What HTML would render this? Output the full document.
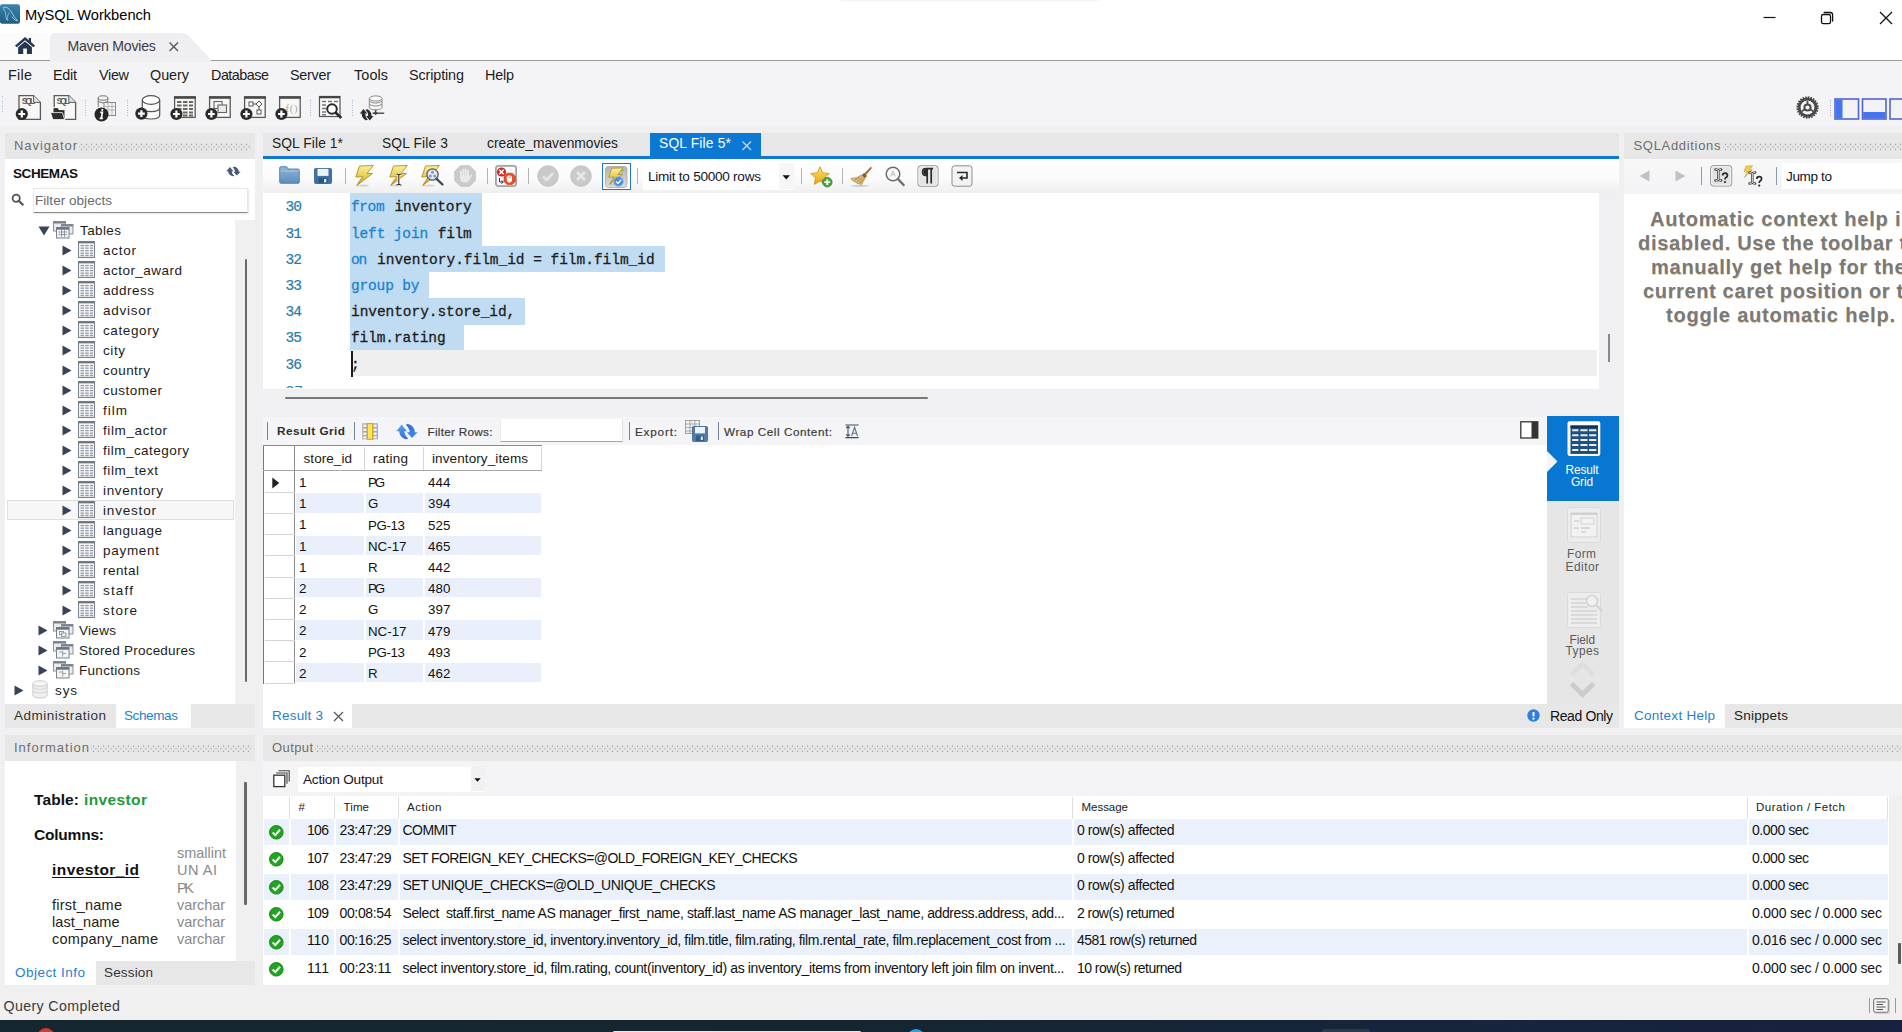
<!DOCTYPE html>
<html>
<head>
<meta charset="utf-8">
<title>MySQL Workbench</title>
<style>
*{box-sizing:border-box;margin:0;padding:0}
html,body{width:1902px;height:1032px;overflow:hidden;background:#f0f0f2;font-family:"Liberation Sans",sans-serif;color:#1a1a1a}
.a{position:absolute}
.t{position:absolute;white-space:pre;line-height:1}
.m{font-family:"Liberation Mono",monospace}
.s{font-family:"Liberation Serif",serif}
svg{overflow:visible}
</style>
</head>
<body>
<div class="a" style="left:0px;top:0px;width:1902px;height:60px;background:#ffffff;"></div>
<div class="a" style="left:840px;top:0px;width:260px;height:2px;background:linear-gradient(#ececec,#ffffff);border-radius:0 0 60px 60px;opacity:.7;"></div>
<svg class="a" style="left:0px;top:4px;" width="21" height="21" viewBox="0 0 21 21"><defs><linearGradient id="ai" x1="0" y1="0" x2="0" y2="1"><stop offset="0" stop-color="#3a86ad"/><stop offset="1" stop-color="#1f5d84"/></linearGradient></defs><rect x="0" y="0.2" width="20" height="19.6" rx="2.2" fill="url(#ai)"/>
<path d="M3.2 3.6 C5 2.6 7.6 3.2 9.6 5.6 C12 8.4 13.2 12 16.6 15.4 L17.6 17 L15.4 16.2 C13.8 15.4 12.8 14 12 12.6" fill="none" stroke="#b9d3e2" stroke-width="0.9"/>
<path d="M3.2 3.6 C3.6 5.6 4.8 6.4 5.4 8.4 C6 10.6 5.6 13 6.8 15.6 L7.6 13.6 C7.4 11.4 8.4 10.4 9.2 8.6" fill="none" stroke="#a9c7d9" stroke-width="0.8"/>
<path d="M6.6 14.4 L7.6 16.6 L8.4 15.6" fill="none" stroke="#a9c7d9" stroke-width="0.7"/></svg>
<div class="t" style="top:7.56px;font-size:14.7px;letter-spacing:-0.038px;left:25px;color:#000;">MySQL Workbench</div>
<svg class="a" style="left:1760px;top:8px;" width="140" height="20" viewBox="0 0 140 20"><path d="M3.5 9.5 H15.5" stroke="#111" stroke-width="1.2" fill="none"/>
<rect x="61.5" y="6.5" width="9" height="9.2" rx="1.8" fill="none" stroke="#111" stroke-width="1.3"/>
<path d="M64.2 4.5 H70.3 Q72.6 4.5 72.6 6.8 V13" fill="none" stroke="#111" stroke-width="1.3" stroke-linecap="round"/>
<path d="M120 4 L132 16 M132 4 L120 16" stroke="#111" stroke-width="1.3" fill="none"/></svg>
<svg class="a" style="left:0px;top:30px;" width="52" height="31" viewBox="0 0 52 31"><path d="M0 3 H44 Q48 3 50 7 V31 H0Z" fill="#fbfbfc"/></svg>
<svg class="a" style="left:13.5px;top:35.6px;" width="24" height="20" viewBox="0 0 24 20"><g transform="scale(0.92)"><path d="M12 1 L1 10.5 L3 12.3 L12 4.6 L21 12.3 L23 10.5 L18.5 6.6 V2.2 H16 V4.5 Z" fill="#26364d"/>
<path d="M4.5 12.3 L12 6 L19.5 12.3 V19.5 H14 V13.5 H10 V19.5 H4.5 Z" fill="#26364d"/></g></svg>
<svg class="a" style="left:50px;top:30px;" width="165" height="31" viewBox="0 0 165 31"><path d="M0 31 V7 Q0 3 4 3 H131 Q136 3 139 6 L162 31 Z" fill="#efeff2"/></svg>
<div class="t" style="top:39.36px;font-size:14.1px;letter-spacing:-0.233px;left:67.5px;color:#3c3c44;">Maven Movies</div>
<svg class="a" style="left:168px;top:41px;" width="12" height="12" viewBox="0 0 12 12"><path d="M1.5 1.5 L10 10 M10 1.5 L1.5 10" stroke="#555" stroke-width="1.3"/></svg>
<div class="a" style="left:0px;top:60px;width:50px;height:1px;background:#9a9a9a;"></div>
<div class="a" style="left:211px;top:60px;width:1691px;height:1px;background:#9a9a9a;"></div>
<div class="a" style="left:0px;top:61px;width:1902px;height:66px;background:#f4f4f6;"></div>
<div class="a" style="left:0px;top:61px;width:211px;height:1px;background:#efeff2;"></div>
<div class="t" style="top:67.81px;font-size:14.4px;letter-spacing:0.266px;left:8px;color:#1c1c1c;">File</div>
<div class="t" style="top:67.81px;font-size:14.4px;letter-spacing:-0.271px;left:53px;color:#1c1c1c;">Edit</div>
<div class="t" style="top:67.81px;font-size:14.4px;letter-spacing:-0.312px;left:99px;color:#1c1c1c;">View</div>
<div class="t" style="top:67.81px;font-size:14.4px;letter-spacing:-0.051px;left:150px;color:#1c1c1c;">Query</div>
<div class="t" style="top:67.81px;font-size:14.4px;letter-spacing:-0.516px;left:211px;color:#1c1c1c;">Database</div>
<div class="t" style="top:67.81px;font-size:14.4px;letter-spacing:-0.278px;left:290px;color:#1c1c1c;">Server</div>
<div class="t" style="top:67.81px;font-size:14.4px;letter-spacing:0.102px;left:354px;color:#1c1c1c;">Tools</div>
<div class="t" style="top:67.81px;font-size:14.4px;letter-spacing:-0.125px;left:409px;color:#1c1c1c;">Scripting</div>
<div class="t" style="top:67.81px;font-size:14.4px;letter-spacing:-0.203px;left:485px;color:#1c1c1c;">Help</div>
<div class="a" style="left:0px;top:126px;width:1902px;height:7px;background:#f0f0f2;"></div>
<div class="a" style="left:2px;top:96px;width:1.2px;height:17px;background-image:linear-gradient(#8ea6ca 50%,rgba(0,0,0,0) 50%);background-size:1.2px 2.5px;opacity:.85;"></div>
<div class="a" style="left:85px;top:99.5px;width:1.2px;height:17px;background-image:linear-gradient(#8ea6ca 50%,rgba(0,0,0,0) 50%);background-size:1.2px 2.5px;opacity:.85;"></div>
<div class="a" style="left:127px;top:99.5px;width:1.2px;height:17px;background-image:linear-gradient(#8ea6ca 50%,rgba(0,0,0,0) 50%);background-size:1.2px 2.5px;opacity:.85;"></div>
<div class="a" style="left:310px;top:99.5px;width:1.2px;height:17px;background-image:linear-gradient(#8ea6ca 50%,rgba(0,0,0,0) 50%);background-size:1.2px 2.5px;opacity:.85;"></div>
<div class="a" style="left:352px;top:99.5px;width:1.2px;height:17px;background-image:linear-gradient(#8ea6ca 50%,rgba(0,0,0,0) 50%);background-size:1.2px 2.5px;opacity:.85;"></div>
<svg class="a" style="left:15px;top:95px;" width="28" height="27" viewBox="0 0 28 27"><path d="M4 0.6 H18.6 L25.4 7.4 V24.4 H4 Z" fill="#f7f7f7" stroke="#5a5a5a" stroke-width="1.3"/><path d="M18.6 0.6 V7.4 H25.4" fill="#e2e2e2" stroke="#5a5a5a" stroke-width="1"/><circle cx="6.8" cy="19" r="6.1" fill="#2b2b2b"/><path d="M3.4 19 H10.2 M6.8 15.6 V22.4" stroke="#fff" stroke-width="2.2"/></svg>
<svg class="a" style="left:49px;top:95px;" width="28" height="27" viewBox="0 0 28 27"><g transform="translate(1.2,0)"><path d="M4 0.6 H18.6 L25.4 7.4 V24.4 H4 Z" fill="#f7f7f7" stroke="#5a5a5a" stroke-width="1.3"/><path d="M18.6 0.6 V7.4 H25.4" fill="#e2e2e2" stroke="#5a5a5a" stroke-width="1"/></g><path d="M4 24.6 V12.6 H9 L10 14.6 H16 V24.6Z" fill="#2e2e2e" stroke="#fff" stroke-width="1"/><path d="M1.6 17.6 H13.4 L15.6 24.6 H3.8Z" fill="#2e2e2e" stroke="#fff" stroke-width="0.8"/></svg>
<div class="t" style="top:96.82px;font-size:8.6px;letter-spacing:-2.236px;left:21.7px;color:#5a5a5a;font-weight:700;">SQL</div>
<div class="t" style="top:96.82px;font-size:8.6px;letter-spacing:-2.236px;left:56.6px;color:#5a5a5a;font-weight:700;">SQL</div>
<svg class="a" style="left:92px;top:93px;" width="26" height="30" viewBox="0 0 26 30"><ellipse cx="11" cy="5" rx="4.8" ry="2.2" fill="#f2f2f2" stroke="#777" stroke-width="1"/><path d="M6.2 5 V14 M15.8 5 V10" stroke="#777" fill="none"/><path d="M6.2 8.5 Q11 11.5 15.8 8.5" stroke="#777" fill="none"/>
<rect x="12" y="9.5" width="11.5" height="13" fill="#f4f4f4" stroke="#888" stroke-width="1"/><path d="M12 13.5 H23.5 M12 17 H23.5 M16 9.5 V22.5 M20 9.5 V22.5" stroke="#aaa" stroke-width="0.8"/>
<circle cx="9.5" cy="21.5" r="7" fill="#262626"/><path d="M10.5 15.8 l-0.4 2.2 M8.2 19.3 h2.2 l-1.1 6 M7.6 25.3 h3.4" stroke="#fff" stroke-width="1.7" fill="none"/></svg>
<svg class="a" style="left:134px;top:94px;" width="28" height="28" viewBox="0 0 28 28"><path d="M8.3 6 V21 Q8.3 25 17 25 Q25.7 25 25.7 21 V6" fill="#fbfbfb" stroke="#555" stroke-width="1.2"/><ellipse cx="17" cy="6" rx="8.7" ry="4.3" fill="#fdfdfd" stroke="#555" stroke-width="1.2"/><path d="M8.3 13.5 Q8.3 17.6 17 17.6 Q25.7 17.6 25.7 13.5" fill="none" stroke="#555" stroke-width="1.2"/><circle cx="7.4" cy="19.6" r="6.1" fill="#2b2b2b"/><path d="M4.0 19.6 H10.8 M7.4 16.200000000000003 V23.0" stroke="#fff" stroke-width="2.2"/></svg>
<svg class="a" style="left:169px;top:95px;" width="28" height="27" viewBox="0 0 28 27"><rect x="5.6" y="1.8" width="20.6" height="20.6" fill="#f7f7f5" stroke="#5a5a5a" stroke-width="1.3"/><path d="M5 2.6 H26.8" stroke="#4a4a4a" stroke-width="2.4"/><path d="M8 7 H12.5 M14 7 H18.5 M20 7 H24 M8 10.5 H12.5 M14 10.5 H18.5 M20 10.5 H24 M8 14 H12.5 M14 14 H18.5 M20 14 H24 M8 17.5 H12.5 M14 17.5 H18.5 M20 17.5 H24 M14 20.5 H18.5 M20 20.5 H24" stroke="#666" stroke-width="1.8"/><circle cx="7.4" cy="19" r="6.1" fill="#2b2b2b"/><path d="M4.0 19 H10.8 M7.4 15.6 V22.4" stroke="#fff" stroke-width="2.2"/></svg>
<svg class="a" style="left:204px;top:95px;" width="28" height="27" viewBox="0 0 28 27"><rect x="5.6" y="1.8" width="20.6" height="20.6" fill="#f7f7f5" stroke="#5a5a5a" stroke-width="1.3"/><path d="M5 2.6 H26.8" stroke="#4a4a4a" stroke-width="2.4"/><rect x="10" y="6.5" width="8" height="7" fill="#f4f4f4" stroke="#666" stroke-width="1.1"/><rect x="14" y="10" width="8.5" height="7.5" fill="#ececec" stroke="#666" stroke-width="1.1"/><circle cx="7.4" cy="19" r="6.1" fill="#2b2b2b"/><path d="M4.0 19 H10.8 M7.4 15.6 V22.4" stroke="#fff" stroke-width="2.2"/></svg>
<svg class="a" style="left:239px;top:95px;" width="28" height="27" viewBox="0 0 28 27"><rect x="5.6" y="1.8" width="20.6" height="20.6" fill="#f7f7f5" stroke="#5a5a5a" stroke-width="1.3"/><path d="M5 2.6 H26.8" stroke="#4a4a4a" stroke-width="2.4"/><rect x="10" y="7" width="4" height="4" fill="#fff" stroke="#555" stroke-width="1"/><path d="M14 9 H17" stroke="#555"/><path d="M20 6 L23 9 L20 12 L17 9 Z" fill="#fff" stroke="#555" stroke-width="1"/><path d="M20 12 V15" stroke="#555"/><rect x="18" y="15" width="4" height="4" fill="#fff" stroke="#555" stroke-width="1"/><circle cx="7.4" cy="19" r="6.1" fill="#2b2b2b"/><path d="M4.0 19 H10.8 M7.4 15.6 V22.4" stroke="#fff" stroke-width="2.2"/></svg>
<svg class="a" style="left:274px;top:95px;" width="28" height="27" viewBox="0 0 28 27"><rect x="5.6" y="1.8" width="20.6" height="20.6" fill="#f7f7f5" stroke="#5a5a5a" stroke-width="1.3"/><path d="M5 2.6 H26.8" stroke="#4a4a4a" stroke-width="2.4"/><text x="11.5" y="16.5" font-family="Liberation Serif" font-size="10.5" fill="#a8a8a8" textLength="12">f()</text><circle cx="7.4" cy="19" r="6.1" fill="#2b2b2b"/><path d="M4.0 19 H10.8 M7.4 15.6 V22.4" stroke="#fff" stroke-width="2.2"/></svg>
<svg class="a" style="left:318px;top:95px;" width="27" height="27" viewBox="0 0 27 27"><rect x="1.5" y="1.5" width="20.5" height="20" fill="#fbfbfb" stroke="#555" stroke-width="1.2"/><path d="M1.5 2.2 H22" stroke="#444" stroke-width="2.2"/><path d="M4 6.5 H8 M10 6.5 H14 M16 6.5 H20 M4 10 H8 M4 13.5 H8 M4 17 H8 M4 19.8 H8" stroke="#777" stroke-width="1.6"/>
<circle cx="14" cy="14" r="4.8" fill="#fff" stroke="#2b2b2b" stroke-width="2"/><path d="M17.5 17.5 L23.3 23" stroke="#2b2b2b" stroke-width="2.6"/></svg>
<svg class="a" style="left:359px;top:93px;" width="28" height="30" viewBox="0 0 28 30"><path d="M10.3 5.5 V14.2 Q10.3 16.8 16.65 16.8 Q23 16.8 23 14.2 V5.5" fill="#f6f6f6" stroke="#8a8a8a" stroke-width="1"/><ellipse cx="16.65" cy="5.5" rx="6.35" ry="2.6" fill="#fbfbfb" stroke="#8a8a8a" stroke-width="1"/><path d="M10.3 8.4 Q16.65 11.8 23 8.4 M10.3 11.4 Q16.65 14.8 23 11.4" fill="none" stroke="#8a8a8a" stroke-width="1"/>
<path d="M16.65 16.8 V20 M13.5 20.2 H25.2" stroke="#555" stroke-width="1.4" fill="none"/><path d="M14.2 20.2 L16.6 18.3 L19 20.2 L16.6 22Z" fill="#444"/>
<path d="M4.5 16 L8.2 20.6 L6.2 20.6 Q6.2 24.5 8.8 26.6 Q7.6 27.6 6.3 27.1 Q2.7 25 2.7 20.6 L0.8 20.6 Z" fill="#2b2b2b"/><path d="M10.8 27.6 L7.1 23 L9.1 23 Q9.1 19 6.5 17 Q7.7 16 9 16.5 Q12.6 18.6 12.6 23 L14.5 23 Z" fill="#2b2b2b"/></svg>
<svg class="a" style="left:1796.3px;top:95.9px;" width="23" height="23" viewBox="0 0 23 23"><circle cx="11.5" cy="11.5" r="10.2" fill="none" stroke="#4a4a4a" stroke-width="1.9" stroke-dasharray="1.6 1.07"/><circle cx="11.5" cy="11.5" r="8.4" fill="none" stroke="#4a4a4a" stroke-width="3"/><circle cx="11.5" cy="11.5" r="3.1" fill="none" stroke="#4a4a4a" stroke-width="2"/><path d="M11.5 4.8 V8.6 M5.8 15.2 L9 13.2 M17.2 15.2 L14 13.2" stroke="#4a4a4a" stroke-width="1.7"/></svg>
<div class="a" style="left:1829.5px;top:100px;width:1.2px;height:17px;background-image:linear-gradient(#8ea6ca 50%,rgba(0,0,0,0) 50%);background-size:1.2px 2.5px;"></div>
<svg class="a" style="left:1834px;top:98px;" width="70" height="22" viewBox="0 0 70 22"><rect x="1" y="1" width="23.5" height="20" fill="#f3f3f6" stroke="#4f66cc" stroke-width="1.6"/><rect x="1.6" y="1.6" width="6.9" height="18.8" fill="#4673f0"/>
<rect x="28.5" y="1" width="23.5" height="20" fill="#f3f3f6" stroke="#4f66cc" stroke-width="1.6"/><rect x="29.1" y="14" width="22.3" height="6.4" fill="#4673f0"/>
<rect x="56" y="1" width="23.5" height="20" fill="#f3f3f6" stroke="#4f66cc" stroke-width="1.6"/></svg>
<div class="a" style="left:5px;top:133px;width:250px;height:25.6px;background:#e7e7e7;"></div>
<div class="t" style="top:139.00px;font-size:13px;letter-spacing:0.920px;left:14px;color:#6e6e6e;">Navigator</div>
<div class="a" style="left:79px;top:142.5px;width:172px;height:7px;background-image:radial-gradient(circle,#9a9a9a 0.35px,rgba(154,154,154,0) 1.1px),radial-gradient(circle,#9a9a9a 0.35px,rgba(154,154,154,0) 1.1px);background-size:5px 5px;background-position:0 -1.2px,2.5px 1.3px;"></div>
<div class="a" style="left:5.3px;top:158.8px;width:249.7px;height:61.2px;background:#ffffff;"></div>
<div class="t" style="top:166.57px;font-size:13.5px;letter-spacing:-0.419px;left:13px;color:#111;font-weight:700;">SCHEMAS</div>
<svg class="a" style="left:225.5px;top:166.3px;" width="15" height="11" viewBox="0 0 15 11"><g transform="scale(0.68,0.63)"><path d="M5.7 1.6 L11 8.3 L8.3 8.3 Q8.6 12.5 12.2 15.4 Q11 16.6 9 16 Q3.4 14 3.2 8.3 L0.4 8.3 Z" fill="#46597a"/><path d="M16 15 L10.9 9.2 L13.7 9.2 Q13.4 5 9.8 1.9 Q11 0.7 13 1.2 Q18.6 3.4 18.8 9.2 L21.5 9.2 Z" fill="#46597a"/></g></svg>
<svg class="a" style="left:11px;top:193px;" width="14" height="14" viewBox="0 0 14 14"><circle cx="5.2" cy="5.2" r="3.6" fill="none" stroke="#555" stroke-width="1.8"/><path d="M7.8 7.8 L12.3 12.3" stroke="#555" stroke-width="2.2"/></svg>
<div class="a" style="left:33px;top:188px;width:215px;height:25px;background:#ffffff;border:1px solid #e9e9e9;border-bottom:1.5px solid #8a8a8a;box-shadow:1px 1px 1.5px rgba(0,0,0,.10);"></div>
<div class="t" style="top:193.57px;font-size:13.5px;letter-spacing:0.036px;left:35px;color:#6a6a6a;">Filter objects</div>
<div class="a" style="left:5.3px;top:220px;width:229.7px;height:484px;background:#ffffff;"></div>
<div class="a" style="left:235px;top:220px;width:20px;height:484px;background:#f0f0f1;"></div>
<div class="a" style="left:244.6px;top:259px;width:2.5px;height:423px;background:#6b6b6b;border-radius:1px;"></div>
<div class="a" style="left:7px;top:500px;width:227px;height:20px;background:#f7f7f7;border:1px solid #dedede;"></div>
<svg class="a" style="left:38px;top:225.5px;" width="12" height="10" viewBox="0 0 12 10"><path d="M0.5 0.5 H11.5 L6 9.5Z" fill="#38435a"/></svg>
<svg class="a" style="left:53px;top:221px;" width="21" height="18" viewBox="0 0 21 18"><rect x="0.5" y="0.5" width="12" height="9.5" fill="#e9ebee" stroke="#8b919c" stroke-width="1"/><path d="M0.5 1.5 H12.5" stroke="#7b818d" stroke-width="2"/>
<rect x="8.5" y="3.5" width="11.5" height="9.5" fill="#e9ebee" stroke="#8b919c" stroke-width="1"/><path d="M8.5 4.5 H20" stroke="#7b818d" stroke-width="2"/>
<rect x="3.5" y="6.5" width="12.5" height="10.5" fill="#f4f5f7" stroke="#7b818d" stroke-width="1"/><path d="M3.5 7.6 H16" stroke="#6d7380" stroke-width="2.2"/><path d="M5.5 11 H14 M5.5 13.5 H14 M8.5 9 V16 M11.5 9 V16" stroke="#888" stroke-width="0.8"/></svg>
<div class="t" style="top:223.87px;font-size:13.5px;letter-spacing:0.394px;left:80px;color:#1c1c1c;">Tables</div>
<svg class="a" style="left:62px;top:244.5px;" width="10" height="11" viewBox="0 0 10 11"><path d="M0.5 0.5 L9.5 5.5 L0.5 10.5Z" fill="#38435a"/></svg>
<svg class="a" style="left:78px;top:241px;" width="17" height="17" viewBox="0 0 17 17"><rect x="0.5" y="0.5" width="16" height="16" fill="#f6f7f8" stroke="#7c8392" stroke-width="1.1"/><path d="M0.5 1.4 H16.5" stroke="#6f7686" stroke-width="1.9"/><path d="M2.5 4.6 H6 M7.2 4.6 H10.7 M11.9 4.6 H15 M2.5 7.1 H6 M7.2 7.1 H10.7 M11.9 7.1 H15 M2.5 9.6 H6 M7.2 9.6 H10.7 M11.9 9.6 H15 M2.5 12.1 H6 M7.2 12.1 H10.7 M11.9 12.1 H15 M2.5 14.5 H6 M7.2 14.5 H10.7 M11.9 14.5 H15" stroke="#9399a6" stroke-width="1.3"/></svg>
<div class="t" style="top:243.87px;font-size:13.5px;letter-spacing:0.746px;left:103px;color:#1c1c1c;">actor</div>
<svg class="a" style="left:62px;top:264.5px;" width="10" height="11" viewBox="0 0 10 11"><path d="M0.5 0.5 L9.5 5.5 L0.5 10.5Z" fill="#38435a"/></svg>
<svg class="a" style="left:78px;top:261px;" width="17" height="17" viewBox="0 0 17 17"><rect x="0.5" y="0.5" width="16" height="16" fill="#f6f7f8" stroke="#7c8392" stroke-width="1.1"/><path d="M0.5 1.4 H16.5" stroke="#6f7686" stroke-width="1.9"/><path d="M2.5 4.6 H6 M7.2 4.6 H10.7 M11.9 4.6 H15 M2.5 7.1 H6 M7.2 7.1 H10.7 M11.9 7.1 H15 M2.5 9.6 H6 M7.2 9.6 H10.7 M11.9 9.6 H15 M2.5 12.1 H6 M7.2 12.1 H10.7 M11.9 12.1 H15 M2.5 14.5 H6 M7.2 14.5 H10.7 M11.9 14.5 H15" stroke="#9399a6" stroke-width="1.3"/></svg>
<div class="t" style="top:263.87px;font-size:13.5px;letter-spacing:0.470px;left:103px;color:#1c1c1c;">actor_award</div>
<svg class="a" style="left:62px;top:284.5px;" width="10" height="11" viewBox="0 0 10 11"><path d="M0.5 0.5 L9.5 5.5 L0.5 10.5Z" fill="#38435a"/></svg>
<svg class="a" style="left:78px;top:281px;" width="17" height="17" viewBox="0 0 17 17"><rect x="0.5" y="0.5" width="16" height="16" fill="#f6f7f8" stroke="#7c8392" stroke-width="1.1"/><path d="M0.5 1.4 H16.5" stroke="#6f7686" stroke-width="1.9"/><path d="M2.5 4.6 H6 M7.2 4.6 H10.7 M11.9 4.6 H15 M2.5 7.1 H6 M7.2 7.1 H10.7 M11.9 7.1 H15 M2.5 9.6 H6 M7.2 9.6 H10.7 M11.9 9.6 H15 M2.5 12.1 H6 M7.2 12.1 H10.7 M11.9 12.1 H15 M2.5 14.5 H6 M7.2 14.5 H10.7 M11.9 14.5 H15" stroke="#9399a6" stroke-width="1.3"/></svg>
<div class="t" style="top:283.87px;font-size:13.5px;letter-spacing:0.495px;left:103px;color:#1c1c1c;">address</div>
<svg class="a" style="left:62px;top:304.5px;" width="10" height="11" viewBox="0 0 10 11"><path d="M0.5 0.5 L9.5 5.5 L0.5 10.5Z" fill="#38435a"/></svg>
<svg class="a" style="left:78px;top:301px;" width="17" height="17" viewBox="0 0 17 17"><rect x="0.5" y="0.5" width="16" height="16" fill="#f6f7f8" stroke="#7c8392" stroke-width="1.1"/><path d="M0.5 1.4 H16.5" stroke="#6f7686" stroke-width="1.9"/><path d="M2.5 4.6 H6 M7.2 4.6 H10.7 M11.9 4.6 H15 M2.5 7.1 H6 M7.2 7.1 H10.7 M11.9 7.1 H15 M2.5 9.6 H6 M7.2 9.6 H10.7 M11.9 9.6 H15 M2.5 12.1 H6 M7.2 12.1 H10.7 M11.9 12.1 H15 M2.5 14.5 H6 M7.2 14.5 H10.7 M11.9 14.5 H15" stroke="#9399a6" stroke-width="1.3"/></svg>
<div class="t" style="top:303.87px;font-size:13.5px;letter-spacing:0.745px;left:103px;color:#1c1c1c;">advisor</div>
<svg class="a" style="left:62px;top:324.5px;" width="10" height="11" viewBox="0 0 10 11"><path d="M0.5 0.5 L9.5 5.5 L0.5 10.5Z" fill="#38435a"/></svg>
<svg class="a" style="left:78px;top:321px;" width="17" height="17" viewBox="0 0 17 17"><rect x="0.5" y="0.5" width="16" height="16" fill="#f6f7f8" stroke="#7c8392" stroke-width="1.1"/><path d="M0.5 1.4 H16.5" stroke="#6f7686" stroke-width="1.9"/><path d="M2.5 4.6 H6 M7.2 4.6 H10.7 M11.9 4.6 H15 M2.5 7.1 H6 M7.2 7.1 H10.7 M11.9 7.1 H15 M2.5 9.6 H6 M7.2 9.6 H10.7 M11.9 9.6 H15 M2.5 12.1 H6 M7.2 12.1 H10.7 M11.9 12.1 H15 M2.5 14.5 H6 M7.2 14.5 H10.7 M11.9 14.5 H15" stroke="#9399a6" stroke-width="1.3"/></svg>
<div class="t" style="top:323.87px;font-size:13.5px;letter-spacing:0.603px;left:103px;color:#1c1c1c;">category</div>
<svg class="a" style="left:62px;top:344.5px;" width="10" height="11" viewBox="0 0 10 11"><path d="M0.5 0.5 L9.5 5.5 L0.5 10.5Z" fill="#38435a"/></svg>
<svg class="a" style="left:78px;top:341px;" width="17" height="17" viewBox="0 0 17 17"><rect x="0.5" y="0.5" width="16" height="16" fill="#f6f7f8" stroke="#7c8392" stroke-width="1.1"/><path d="M0.5 1.4 H16.5" stroke="#6f7686" stroke-width="1.9"/><path d="M2.5 4.6 H6 M7.2 4.6 H10.7 M11.9 4.6 H15 M2.5 7.1 H6 M7.2 7.1 H10.7 M11.9 7.1 H15 M2.5 9.6 H6 M7.2 9.6 H10.7 M11.9 9.6 H15 M2.5 12.1 H6 M7.2 12.1 H10.7 M11.9 12.1 H15 M2.5 14.5 H6 M7.2 14.5 H10.7 M11.9 14.5 H15" stroke="#9399a6" stroke-width="1.3"/></svg>
<div class="t" style="top:343.87px;font-size:13.5px;letter-spacing:0.583px;left:103px;color:#1c1c1c;">city</div>
<svg class="a" style="left:62px;top:364.5px;" width="10" height="11" viewBox="0 0 10 11"><path d="M0.5 0.5 L9.5 5.5 L0.5 10.5Z" fill="#38435a"/></svg>
<svg class="a" style="left:78px;top:361px;" width="17" height="17" viewBox="0 0 17 17"><rect x="0.5" y="0.5" width="16" height="16" fill="#f6f7f8" stroke="#7c8392" stroke-width="1.1"/><path d="M0.5 1.4 H16.5" stroke="#6f7686" stroke-width="1.9"/><path d="M2.5 4.6 H6 M7.2 4.6 H10.7 M11.9 4.6 H15 M2.5 7.1 H6 M7.2 7.1 H10.7 M11.9 7.1 H15 M2.5 9.6 H6 M7.2 9.6 H10.7 M11.9 9.6 H15 M2.5 12.1 H6 M7.2 12.1 H10.7 M11.9 12.1 H15 M2.5 14.5 H6 M7.2 14.5 H10.7 M11.9 14.5 H15" stroke="#9399a6" stroke-width="1.3"/></svg>
<div class="t" style="top:363.87px;font-size:13.5px;letter-spacing:0.453px;left:103px;color:#1c1c1c;">country</div>
<svg class="a" style="left:62px;top:384.5px;" width="10" height="11" viewBox="0 0 10 11"><path d="M0.5 0.5 L9.5 5.5 L0.5 10.5Z" fill="#38435a"/></svg>
<svg class="a" style="left:78px;top:381px;" width="17" height="17" viewBox="0 0 17 17"><rect x="0.5" y="0.5" width="16" height="16" fill="#f6f7f8" stroke="#7c8392" stroke-width="1.1"/><path d="M0.5 1.4 H16.5" stroke="#6f7686" stroke-width="1.9"/><path d="M2.5 4.6 H6 M7.2 4.6 H10.7 M11.9 4.6 H15 M2.5 7.1 H6 M7.2 7.1 H10.7 M11.9 7.1 H15 M2.5 9.6 H6 M7.2 9.6 H10.7 M11.9 9.6 H15 M2.5 12.1 H6 M7.2 12.1 H10.7 M11.9 12.1 H15 M2.5 14.5 H6 M7.2 14.5 H10.7 M11.9 14.5 H15" stroke="#9399a6" stroke-width="1.3"/></svg>
<div class="t" style="top:383.87px;font-size:13.5px;letter-spacing:0.496px;left:103px;color:#1c1c1c;">customer</div>
<svg class="a" style="left:62px;top:404.5px;" width="10" height="11" viewBox="0 0 10 11"><path d="M0.5 0.5 L9.5 5.5 L0.5 10.5Z" fill="#38435a"/></svg>
<svg class="a" style="left:78px;top:401px;" width="17" height="17" viewBox="0 0 17 17"><rect x="0.5" y="0.5" width="16" height="16" fill="#f6f7f8" stroke="#7c8392" stroke-width="1.1"/><path d="M0.5 1.4 H16.5" stroke="#6f7686" stroke-width="1.9"/><path d="M2.5 4.6 H6 M7.2 4.6 H10.7 M11.9 4.6 H15 M2.5 7.1 H6 M7.2 7.1 H10.7 M11.9 7.1 H15 M2.5 9.6 H6 M7.2 9.6 H10.7 M11.9 9.6 H15 M2.5 12.1 H6 M7.2 12.1 H10.7 M11.9 12.1 H15 M2.5 14.5 H6 M7.2 14.5 H10.7 M11.9 14.5 H15" stroke="#9399a6" stroke-width="1.3"/></svg>
<div class="t" style="top:403.87px;font-size:13.5px;letter-spacing:1.000px;left:103px;color:#1c1c1c;">film</div>
<svg class="a" style="left:62px;top:424.5px;" width="10" height="11" viewBox="0 0 10 11"><path d="M0.5 0.5 L9.5 5.5 L0.5 10.5Z" fill="#38435a"/></svg>
<svg class="a" style="left:78px;top:421px;" width="17" height="17" viewBox="0 0 17 17"><rect x="0.5" y="0.5" width="16" height="16" fill="#f6f7f8" stroke="#7c8392" stroke-width="1.1"/><path d="M0.5 1.4 H16.5" stroke="#6f7686" stroke-width="1.9"/><path d="M2.5 4.6 H6 M7.2 4.6 H10.7 M11.9 4.6 H15 M2.5 7.1 H6 M7.2 7.1 H10.7 M11.9 7.1 H15 M2.5 9.6 H6 M7.2 9.6 H10.7 M11.9 9.6 H15 M2.5 12.1 H6 M7.2 12.1 H10.7 M11.9 12.1 H15 M2.5 14.5 H6 M7.2 14.5 H10.7 M11.9 14.5 H15" stroke="#9399a6" stroke-width="1.3"/></svg>
<div class="t" style="top:423.87px;font-size:13.5px;letter-spacing:0.609px;left:103px;color:#1c1c1c;">film_actor</div>
<svg class="a" style="left:62px;top:444.5px;" width="10" height="11" viewBox="0 0 10 11"><path d="M0.5 0.5 L9.5 5.5 L0.5 10.5Z" fill="#38435a"/></svg>
<svg class="a" style="left:78px;top:441px;" width="17" height="17" viewBox="0 0 17 17"><rect x="0.5" y="0.5" width="16" height="16" fill="#f6f7f8" stroke="#7c8392" stroke-width="1.1"/><path d="M0.5 1.4 H16.5" stroke="#6f7686" stroke-width="1.9"/><path d="M2.5 4.6 H6 M7.2 4.6 H10.7 M11.9 4.6 H15 M2.5 7.1 H6 M7.2 7.1 H10.7 M11.9 7.1 H15 M2.5 9.6 H6 M7.2 9.6 H10.7 M11.9 9.6 H15 M2.5 12.1 H6 M7.2 12.1 H10.7 M11.9 12.1 H15 M2.5 14.5 H6 M7.2 14.5 H10.7 M11.9 14.5 H15" stroke="#9399a6" stroke-width="1.3"/></svg>
<div class="t" style="top:443.87px;font-size:13.5px;letter-spacing:0.475px;left:103px;color:#1c1c1c;">film_category</div>
<svg class="a" style="left:62px;top:464.5px;" width="10" height="11" viewBox="0 0 10 11"><path d="M0.5 0.5 L9.5 5.5 L0.5 10.5Z" fill="#38435a"/></svg>
<svg class="a" style="left:78px;top:461px;" width="17" height="17" viewBox="0 0 17 17"><rect x="0.5" y="0.5" width="16" height="16" fill="#f6f7f8" stroke="#7c8392" stroke-width="1.1"/><path d="M0.5 1.4 H16.5" stroke="#6f7686" stroke-width="1.9"/><path d="M2.5 4.6 H6 M7.2 4.6 H10.7 M11.9 4.6 H15 M2.5 7.1 H6 M7.2 7.1 H10.7 M11.9 7.1 H15 M2.5 9.6 H6 M7.2 9.6 H10.7 M11.9 9.6 H15 M2.5 12.1 H6 M7.2 12.1 H10.7 M11.9 12.1 H15 M2.5 14.5 H6 M7.2 14.5 H10.7 M11.9 14.5 H15" stroke="#9399a6" stroke-width="1.3"/></svg>
<div class="t" style="top:463.87px;font-size:13.5px;letter-spacing:0.592px;left:103px;color:#1c1c1c;">film_text</div>
<svg class="a" style="left:62px;top:484.5px;" width="10" height="11" viewBox="0 0 10 11"><path d="M0.5 0.5 L9.5 5.5 L0.5 10.5Z" fill="#38435a"/></svg>
<svg class="a" style="left:78px;top:481px;" width="17" height="17" viewBox="0 0 17 17"><rect x="0.5" y="0.5" width="16" height="16" fill="#f6f7f8" stroke="#7c8392" stroke-width="1.1"/><path d="M0.5 1.4 H16.5" stroke="#6f7686" stroke-width="1.9"/><path d="M2.5 4.6 H6 M7.2 4.6 H10.7 M11.9 4.6 H15 M2.5 7.1 H6 M7.2 7.1 H10.7 M11.9 7.1 H15 M2.5 9.6 H6 M7.2 9.6 H10.7 M11.9 9.6 H15 M2.5 12.1 H6 M7.2 12.1 H10.7 M11.9 12.1 H15 M2.5 14.5 H6 M7.2 14.5 H10.7 M11.9 14.5 H15" stroke="#9399a6" stroke-width="1.3"/></svg>
<div class="t" style="top:483.87px;font-size:13.5px;letter-spacing:0.652px;left:103px;color:#1c1c1c;">inventory</div>
<svg class="a" style="left:62px;top:504.5px;" width="10" height="11" viewBox="0 0 10 11"><path d="M0.5 0.5 L9.5 5.5 L0.5 10.5Z" fill="#38435a"/></svg>
<svg class="a" style="left:78px;top:501px;" width="17" height="17" viewBox="0 0 17 17"><rect x="0.5" y="0.5" width="16" height="16" fill="#f6f7f8" stroke="#7c8392" stroke-width="1.1"/><path d="M0.5 1.4 H16.5" stroke="#6f7686" stroke-width="1.9"/><path d="M2.5 4.6 H6 M7.2 4.6 H10.7 M11.9 4.6 H15 M2.5 7.1 H6 M7.2 7.1 H10.7 M11.9 7.1 H15 M2.5 9.6 H6 M7.2 9.6 H10.7 M11.9 9.6 H15 M2.5 12.1 H6 M7.2 12.1 H10.7 M11.9 12.1 H15 M2.5 14.5 H6 M7.2 14.5 H10.7 M11.9 14.5 H15" stroke="#9399a6" stroke-width="1.3"/></svg>
<div class="t" style="top:503.87px;font-size:13.5px;letter-spacing:0.817px;left:103px;color:#1c1c1c;">investor</div>
<svg class="a" style="left:62px;top:524.5px;" width="10" height="11" viewBox="0 0 10 11"><path d="M0.5 0.5 L9.5 5.5 L0.5 10.5Z" fill="#38435a"/></svg>
<svg class="a" style="left:78px;top:521px;" width="17" height="17" viewBox="0 0 17 17"><rect x="0.5" y="0.5" width="16" height="16" fill="#f6f7f8" stroke="#7c8392" stroke-width="1.1"/><path d="M0.5 1.4 H16.5" stroke="#6f7686" stroke-width="1.9"/><path d="M2.5 4.6 H6 M7.2 4.6 H10.7 M11.9 4.6 H15 M2.5 7.1 H6 M7.2 7.1 H10.7 M11.9 7.1 H15 M2.5 9.6 H6 M7.2 9.6 H10.7 M11.9 9.6 H15 M2.5 12.1 H6 M7.2 12.1 H10.7 M11.9 12.1 H15 M2.5 14.5 H6 M7.2 14.5 H10.7 M11.9 14.5 H15" stroke="#9399a6" stroke-width="1.3"/></svg>
<div class="t" style="top:523.87px;font-size:13.5px;letter-spacing:0.491px;left:103px;color:#1c1c1c;">language</div>
<svg class="a" style="left:62px;top:544.5px;" width="10" height="11" viewBox="0 0 10 11"><path d="M0.5 0.5 L9.5 5.5 L0.5 10.5Z" fill="#38435a"/></svg>
<svg class="a" style="left:78px;top:541px;" width="17" height="17" viewBox="0 0 17 17"><rect x="0.5" y="0.5" width="16" height="16" fill="#f6f7f8" stroke="#7c8392" stroke-width="1.1"/><path d="M0.5 1.4 H16.5" stroke="#6f7686" stroke-width="1.9"/><path d="M2.5 4.6 H6 M7.2 4.6 H10.7 M11.9 4.6 H15 M2.5 7.1 H6 M7.2 7.1 H10.7 M11.9 7.1 H15 M2.5 9.6 H6 M7.2 9.6 H10.7 M11.9 9.6 H15 M2.5 12.1 H6 M7.2 12.1 H10.7 M11.9 12.1 H15 M2.5 14.5 H6 M7.2 14.5 H10.7 M11.9 14.5 H15" stroke="#9399a6" stroke-width="1.3"/></svg>
<div class="t" style="top:543.87px;font-size:13.5px;letter-spacing:0.703px;left:103px;color:#1c1c1c;">payment</div>
<svg class="a" style="left:62px;top:564.5px;" width="10" height="11" viewBox="0 0 10 11"><path d="M0.5 0.5 L9.5 5.5 L0.5 10.5Z" fill="#38435a"/></svg>
<svg class="a" style="left:78px;top:561px;" width="17" height="17" viewBox="0 0 17 17"><rect x="0.5" y="0.5" width="16" height="16" fill="#f6f7f8" stroke="#7c8392" stroke-width="1.1"/><path d="M0.5 1.4 H16.5" stroke="#6f7686" stroke-width="1.9"/><path d="M2.5 4.6 H6 M7.2 4.6 H10.7 M11.9 4.6 H15 M2.5 7.1 H6 M7.2 7.1 H10.7 M11.9 7.1 H15 M2.5 9.6 H6 M7.2 9.6 H10.7 M11.9 9.6 H15 M2.5 12.1 H6 M7.2 12.1 H10.7 M11.9 12.1 H15 M2.5 14.5 H6 M7.2 14.5 H10.7 M11.9 14.5 H15" stroke="#9399a6" stroke-width="1.3"/></svg>
<div class="t" style="top:563.87px;font-size:13.5px;letter-spacing:0.444px;left:103px;color:#1c1c1c;">rental</div>
<svg class="a" style="left:62px;top:584.5px;" width="10" height="11" viewBox="0 0 10 11"><path d="M0.5 0.5 L9.5 5.5 L0.5 10.5Z" fill="#38435a"/></svg>
<svg class="a" style="left:78px;top:581px;" width="17" height="17" viewBox="0 0 17 17"><rect x="0.5" y="0.5" width="16" height="16" fill="#f6f7f8" stroke="#7c8392" stroke-width="1.1"/><path d="M0.5 1.4 H16.5" stroke="#6f7686" stroke-width="1.9"/><path d="M2.5 4.6 H6 M7.2 4.6 H10.7 M11.9 4.6 H15 M2.5 7.1 H6 M7.2 7.1 H10.7 M11.9 7.1 H15 M2.5 9.6 H6 M7.2 9.6 H10.7 M11.9 9.6 H15 M2.5 12.1 H6 M7.2 12.1 H10.7 M11.9 12.1 H15 M2.5 14.5 H6 M7.2 14.5 H10.7 M11.9 14.5 H15" stroke="#9399a6" stroke-width="1.3"/></svg>
<div class="t" style="top:583.87px;font-size:13.5px;letter-spacing:1.180px;left:103px;color:#1c1c1c;">staff</div>
<svg class="a" style="left:62px;top:604.5px;" width="10" height="11" viewBox="0 0 10 11"><path d="M0.5 0.5 L9.5 5.5 L0.5 10.5Z" fill="#38435a"/></svg>
<svg class="a" style="left:78px;top:601px;" width="17" height="17" viewBox="0 0 17 17"><rect x="0.5" y="0.5" width="16" height="16" fill="#f6f7f8" stroke="#7c8392" stroke-width="1.1"/><path d="M0.5 1.4 H16.5" stroke="#6f7686" stroke-width="1.9"/><path d="M2.5 4.6 H6 M7.2 4.6 H10.7 M11.9 4.6 H15 M2.5 7.1 H6 M7.2 7.1 H10.7 M11.9 7.1 H15 M2.5 9.6 H6 M7.2 9.6 H10.7 M11.9 9.6 H15 M2.5 12.1 H6 M7.2 12.1 H10.7 M11.9 12.1 H15 M2.5 14.5 H6 M7.2 14.5 H10.7 M11.9 14.5 H15" stroke="#9399a6" stroke-width="1.3"/></svg>
<div class="t" style="top:603.87px;font-size:13.5px;letter-spacing:0.996px;left:103px;color:#1c1c1c;">store</div>
<svg class="a" style="left:38px;top:624.5px;" width="10" height="11" viewBox="0 0 10 11"><path d="M0.5 0.5 L9.5 5.5 L0.5 10.5Z" fill="#38435a"/></svg>
<svg class="a" style="left:53px;top:621px;" width="21" height="18" viewBox="0 0 21 18"><rect x="0.5" y="0.5" width="12" height="9.5" fill="#e9ebee" stroke="#8b919c" stroke-width="1"/><path d="M0.5 1.5 H12.5" stroke="#7b818d" stroke-width="2"/>
<rect x="8.5" y="3.5" width="11.5" height="9.5" fill="#e9ebee" stroke="#8b919c" stroke-width="1"/><path d="M8.5 4.5 H20" stroke="#7b818d" stroke-width="2"/>
<rect x="3.5" y="6.5" width="12.5" height="10.5" fill="#f4f5f7" stroke="#7b818d" stroke-width="1"/><path d="M3.5 7.6 H16" stroke="#6d7380" stroke-width="2.2"/><rect x="6.5" y="10.5" width="4" height="3" fill="none" stroke="#888" stroke-width="0.8"/><rect x="8.5" y="12" width="4.5" height="3.5" fill="#eee" stroke="#888" stroke-width="0.8"/></svg>
<div class="t" style="top:623.87px;font-size:13.5px;letter-spacing:0.305px;left:79px;color:#1c1c1c;">Views</div>
<svg class="a" style="left:38px;top:644.5px;" width="10" height="11" viewBox="0 0 10 11"><path d="M0.5 0.5 L9.5 5.5 L0.5 10.5Z" fill="#38435a"/></svg>
<svg class="a" style="left:53px;top:641px;" width="21" height="18" viewBox="0 0 21 18"><rect x="0.5" y="0.5" width="12" height="9.5" fill="#e9ebee" stroke="#8b919c" stroke-width="1"/><path d="M0.5 1.5 H12.5" stroke="#7b818d" stroke-width="2"/>
<rect x="8.5" y="3.5" width="11.5" height="9.5" fill="#e9ebee" stroke="#8b919c" stroke-width="1"/><path d="M8.5 4.5 H20" stroke="#7b818d" stroke-width="2"/>
<rect x="3.5" y="6.5" width="12.5" height="10.5" fill="#f4f5f7" stroke="#7b818d" stroke-width="1"/><path d="M3.5 7.6 H16" stroke="#6d7380" stroke-width="2.2"/><path d="M6 11 H9 M9.7 9.5 V15.5 M9.7 12.5 H13" stroke="#888" stroke-width="0.8"/></svg>
<div class="t" style="top:643.87px;font-size:13.5px;letter-spacing:0.215px;left:79px;color:#1c1c1c;">Stored Procedures</div>
<svg class="a" style="left:38px;top:664.5px;" width="10" height="11" viewBox="0 0 10 11"><path d="M0.5 0.5 L9.5 5.5 L0.5 10.5Z" fill="#38435a"/></svg>
<svg class="a" style="left:53px;top:661px;" width="21" height="18" viewBox="0 0 21 18"><rect x="0.5" y="0.5" width="12" height="9.5" fill="#e9ebee" stroke="#8b919c" stroke-width="1"/><path d="M0.5 1.5 H12.5" stroke="#7b818d" stroke-width="2"/>
<rect x="8.5" y="3.5" width="11.5" height="9.5" fill="#e9ebee" stroke="#8b919c" stroke-width="1"/><path d="M8.5 4.5 H20" stroke="#7b818d" stroke-width="2"/>
<rect x="3.5" y="6.5" width="12.5" height="10.5" fill="#f4f5f7" stroke="#7b818d" stroke-width="1"/><path d="M3.5 7.6 H16" stroke="#6d7380" stroke-width="2.2"/><path d="M6 11 H9 M9.7 9.5 V15.5 M9.7 12.5 H13" stroke="#888" stroke-width="0.8"/></svg>
<div class="t" style="top:663.87px;font-size:13.5px;letter-spacing:0.309px;left:79px;color:#1c1c1c;">Functions</div>
<svg class="a" style="left:14px;top:684.5px;" width="10" height="11" viewBox="0 0 10 11"><path d="M0.5 0.5 L9.5 5.5 L0.5 10.5Z" fill="#38435a"/></svg>
<svg class="a" style="left:32px;top:680px;" width="16" height="19" viewBox="0 0 16 19"><path d="M0.8 3.5 V15 Q0.8 18 8 18 Q15.2 18 15.2 15 V3.5" fill="#eeeeee" stroke="#cfcfcf" stroke-width="1"/><ellipse cx="8" cy="3.5" rx="7.2" ry="2.8" fill="#f6f6f6" stroke="#cfcfcf" stroke-width="1"/><path d="M0.8 7.5 Q8 11 15.2 7.5 M0.8 11.3 Q8 14.8 15.2 11.3" fill="none" stroke="#d6d6d6" stroke-width="1"/></svg>
<div class="t" style="top:683.87px;font-size:13.5px;letter-spacing:0.875px;left:55px;color:#1c1c1c;">sys</div>
<div class="a" style="left:5px;top:704px;width:250px;height:24px;background:#e7e7e7;"></div>
<div class="a" style="left:116px;top:704px;width:75px;height:24px;background:#ffffff;"></div>
<div class="t" style="top:708.57px;font-size:13.5px;letter-spacing:0.496px;left:14px;color:#333;">Administration</div>
<div class="t" style="top:708.57px;font-size:13.5px;letter-spacing:-0.380px;left:124px;color:#1f7fd0;">Schemas</div>
<div class="a" style="left:263px;top:133px;width:1356px;height:23px;background:#e7e7e7;"></div>
<div class="a" style="left:263px;top:156.3px;width:1356px;height:2.4px;background:#0b78d4;"></div>
<div class="t" style="top:137.32px;font-size:13.8px;letter-spacing:0.095px;left:272px;color:#222;">SQL File 1*</div>
<div class="t" style="top:137.32px;font-size:13.8px;letter-spacing:0.148px;left:382px;color:#222;">SQL File 3</div>
<div class="t" style="top:137.32px;font-size:13.8px;letter-spacing:-0.008px;left:487px;color:#222;">create_mavenmovies</div>
<div class="a" style="left:650px;top:133px;width:110.5px;height:25px;background:#0b78d4;"></div>
<div class="t" style="top:137.32px;font-size:13.8px;letter-spacing:0.195px;left:659px;color:#fff;">SQL File 5*</div>
<svg class="a" style="left:741px;top:140px;" width="12" height="12" viewBox="0 0 12 12"><path d="M1.5 1.5 L10 10 M10 1.5 L1.5 10" stroke="#c9def2" stroke-width="1.2"/></svg>
<div class="a" style="left:263px;top:158.7px;width:1356px;height:34.3px;background:linear-gradient(#ffffff 0%,#fbfbfb 55%,#efeff0 100%);"></div>
<div class="a" style="left:263px;top:193px;width:1336.3px;height:195.8px;background:#ffffff;"></div>
<div class="a" style="left:1607.8px;top:334px;width:2.7px;height:28.3px;background:#8a8a8a;"></div>
<div class="a" style="left:350.2px;top:193.4px;width:131.45px;height:26.47px;background:#c0dcf3;"></div>
<div class="a" style="left:350.2px;top:219.57px;width:131.45px;height:26.47px;background:#c0dcf3;"></div>
<div class="a" style="left:350.2px;top:245.74px;width:314.36px;height:26.47px;background:#c0dcf3;"></div>
<div class="a" style="left:350.2px;top:271.91px;width:79.19px;height:26.47px;background:#c0dcf3;"></div>
<div class="a" style="left:350.2px;top:298.08px;width:175.0px;height:26.47px;background:#c0dcf3;"></div>
<div class="a" style="left:350.2px;top:324.25px;width:114.03px;height:26.47px;background:#c0dcf3;"></div>
<div class="a" style="left:351px;top:350.2px;width:1245.7px;height:25.8px;background:#efefef;"></div>
<div class="a" style="left:350.5px;top:351px;width:2px;height:25.5px;background:#1a1a1a;"></div>
<div class="t m" style="top:200.49px;font-size:14.5px;letter-spacing:-0.986px;left:285.5px;color:#2a7aa8;-webkit-text-stroke:0.2px #2a7aa8;">30</div>
<div class="t m" style="top:200.49px;font-size:14.5px;letter-spacing:-0.391px;left:351px;color:#1b83cf;-webkit-text-stroke:0.3px #1b83cf;">from</div>
<div class="t m" style="top:200.49px;font-size:14.5px;letter-spacing:-0.124px;left:385.84px;color:#1d1d1d;-webkit-text-stroke:0.3px #1d1d1d;"> inventory</div>
<div class="t m" style="top:226.66px;font-size:14.5px;letter-spacing:-0.986px;left:285.5px;color:#2a7aa8;-webkit-text-stroke:0.2px #2a7aa8;">31</div>
<div class="t m" style="top:226.66px;font-size:14.5px;letter-spacing:-0.142px;left:351px;color:#1b83cf;-webkit-text-stroke:0.3px #1b83cf;">left join</div>
<div class="t m" style="top:226.66px;font-size:14.5px;letter-spacing:-0.291px;left:429.39px;color:#1d1d1d;-webkit-text-stroke:0.3px #1d1d1d;"> film</div>
<div class="t m" style="top:252.83px;font-size:14.5px;letter-spacing:-0.986px;left:285.5px;color:#2a7aa8;-webkit-text-stroke:0.2px #2a7aa8;">32</div>
<div class="t m" style="top:252.83px;font-size:14.5px;letter-spacing:-1.186px;left:351px;color:#1b83cf;-webkit-text-stroke:0.3px #1b83cf;">on</div>
<div class="t m" style="top:252.83px;font-size:14.5px;letter-spacing:-0.029px;left:368.42px;color:#1d1d1d;-webkit-text-stroke:0.3px #1d1d1d;"> inventory.film_id = film.film_id</div>
<div class="t m" style="top:279.00px;font-size:14.5px;letter-spacing:-0.986px;left:285.5px;color:#2a7aa8;-webkit-text-stroke:0.2px #2a7aa8;">33</div>
<div class="t m" style="top:279.00px;font-size:14.5px;letter-spacing:-0.164px;left:351px;color:#1b83cf;-webkit-text-stroke:0.3px #1b83cf;">group by</div>
<div class="t m" style="top:305.17px;font-size:14.5px;letter-spacing:-0.986px;left:285.5px;color:#2a7aa8;-webkit-text-stroke:0.2px #2a7aa8;">34</div>
<div class="t m" style="top:305.17px;font-size:14.5px;letter-spacing:-0.058px;left:351px;color:#1d1d1d;-webkit-text-stroke:0.3px #1d1d1d;">inventory.store_id,</div>
<div class="t m" style="top:331.34px;font-size:14.5px;letter-spacing:-0.986px;left:285.5px;color:#2a7aa8;-webkit-text-stroke:0.2px #2a7aa8;">35</div>
<div class="t m" style="top:331.34px;font-size:14.5px;letter-spacing:-0.111px;left:351px;color:#1d1d1d;-webkit-text-stroke:0.3px #1d1d1d;">film.rating</div>
<div class="t m" style="top:357.51px;font-size:14.5px;letter-spacing:-0.986px;left:285.5px;color:#2a7aa8;-webkit-text-stroke:0.2px #2a7aa8;">36</div>
<div class="t m" style="top:357.51px;font-size:14.5px;left:351px;color:#1d1d1d;-webkit-text-stroke:0.3px #1d1d1d;">;</div>
<div class="a" style="left:280px;top:384px;width:40px;height:4px;overflow:hidden"><div class="t m" style="left:5.5px;top:0.5px;font-size:14.5px;color:#2a7aa8;letter-spacing:0.01px">37</div></div>
<div class="a" style="left:285px;top:397px;width:643px;height:2px;background:#777777;border-radius:1px;"></div>
<svg class="a" style="left:279px;top:166px;" width="21" height="18" viewBox="0 0 21 18"><defs><linearGradient id="fo" x1="0" y1="0" x2="0" y2="1"><stop offset="0" stop-color="#8fb5d6"/><stop offset="1" stop-color="#5c8fbb"/></linearGradient></defs>
<path d="M0.7 2 Q0.7 0.7 2 0.7 H7 Q8 0.7 8.5 1.8 L9 3 H19 Q20.3 3 20.3 4.3 V16 Q20.3 17.3 19 17.3 H2 Q0.7 17.3 0.7 16 Z" fill="url(#fo)" stroke="#4f7fa8" stroke-width="0.9"/><path d="M1.2 5 H19.8" stroke="#a9c8e2" stroke-width="1"/></svg>
<svg class="a" style="left:314px;top:168px;" width="18" height="16" viewBox="0 0 18 16"><path d="M1.5 0.5 H16.5 Q17.5 0.5 17.5 1.5 V14.5 Q17.5 15.5 16.5 15.5 H1.5 Q0.5 15.5 0.5 14.5 V1.5 Q0.5 0.5 1.5 0.5Z" fill="#3f72a3" stroke="#2f5f8f" stroke-width="0.8"/><rect x="3.5" y="0.9" width="11" height="7" fill="#eef3f8"/><rect x="4.5" y="10" width="9" height="5.3" fill="#2b5683"/><rect x="10" y="11" width="2.3" height="3.4" fill="#dfe8f1"/></svg>
<div class="a" style="left:344.5px;top:167.5px;width:1px;height:16px;background:#b4b4b4;"></div>
<svg class="a" style="left:355px;top:165px;" width="19" height="22" viewBox="0 0 19 22"><defs><linearGradient id="bg1" x1="0" y1="0" x2="0" y2="1"><stop offset="0" stop-color="#fbf0a8"/><stop offset="0.5" stop-color="#e9cf52"/><stop offset="1" stop-color="#c29a1c"/></linearGradient></defs>
<ellipse cx="8" cy="20.6" rx="6" ry="1" fill="#bbb" opacity=".6"/>
<path d="M4.5 1 L18.3 0.5 L12 8.6 L17.6 8.4 L1.6 20.6 L7.6 11.6 L0.8 12 Z" fill="url(#bg1)" stroke="#b08d22" stroke-width="0.9" stroke-linejoin="round"/></svg>
<svg class="a" style="left:389px;top:165px;" width="19" height="22" viewBox="0 0 19 22"><defs><linearGradient id="bg2" x1="0" y1="0" x2="0" y2="1"><stop offset="0" stop-color="#fbf0a8"/><stop offset="0.5" stop-color="#e9cf52"/><stop offset="1" stop-color="#c29a1c"/></linearGradient></defs>
<ellipse cx="8" cy="20.6" rx="6" ry="1" fill="#bbb" opacity=".6"/>
<path d="M4.5 1 L18.3 0.5 L12 8.6 L17.6 8.4 L1.6 20.6 L7.6 11.6 L0.8 12 Z" fill="url(#bg2)" stroke="#b08d22" stroke-width="0.9" stroke-linejoin="round"/><path d="M7.3 9 Q9.2 9 9.8 10 Q10.4 9 12.3 9 M9.8 10 V19 M7.3 20 Q9.2 20 9.8 19 Q10.4 20 12.3 20" stroke="#fff" stroke-width="2.6" fill="none"/><path d="M7.3 9 Q9.2 9 9.8 10 Q10.4 9 12.3 9 M9.8 10 V19 M7.3 20 Q9.2 20 9.8 19 Q10.4 20 12.3 20" stroke="#222" stroke-width="1.1" fill="none"/></svg>
<svg class="a" style="left:421px;top:165px;" width="23" height="22" viewBox="0 0 23 22"><defs><linearGradient id="bg3" x1="0" y1="0" x2="0" y2="1"><stop offset="0" stop-color="#fbf0a8"/><stop offset="0.5" stop-color="#e9cf52"/><stop offset="1" stop-color="#c29a1c"/></linearGradient></defs>
<ellipse cx="8" cy="20.6" rx="6" ry="1" fill="#bbb" opacity=".6"/>
<path d="M4.5 1 L18.3 0.5 L12 8.6 L17.6 8.4 L1.6 20.6 L7.6 11.6 L0.8 12 Z" fill="url(#bg3)" stroke="#b08d22" stroke-width="0.9" stroke-linejoin="round"/><circle cx="11.5" cy="9.5" r="5.6" fill="#e9eef5" stroke="#6a6a6a" stroke-width="1.5"/><circle cx="11.5" cy="7.3" r="1.5" fill="#6c9bd6"/><circle cx="9.3" cy="11" r="1.5" fill="#6c9bd6"/><circle cx="13.7" cy="11" r="1.5" fill="#6c9bd6"/><path d="M15.6 13.8 L21.5 19.5" stroke="#4a4a4a" stroke-width="2.4" stroke-linecap="round"/></svg>
<svg class="a" style="left:454px;top:165px;" width="22" height="22" viewBox="0 0 22 22"><path d="M6.5 0.7 H15.5 L21.3 6.5 V15.5 L15.5 21.3 H6.5 L0.7 15.5 V6.5 Z" fill="#cbcbcb" stroke="#c0c0c0" stroke-width="0.8"/><path d="M7 12 V6.5 M9.3 11 V4.8 M11.6 11 V4.4 M13.9 11 V5.4 M15.5 13 L17 10.3" stroke="#e9e9e9" stroke-width="1.9" stroke-linecap="round"/><path d="M6.1 11 H14.9 L16 13 Q15 17.5 11 17.5 Q6.1 17.5 6.1 13Z" fill="#e9e9e9"/></svg>
<div class="a" style="left:487px;top:167.5px;width:1px;height:16px;background:#b4b4b4;"></div>
<svg class="a" style="left:495px;top:165px;" width="22" height="22" viewBox="0 0 22 22"><rect x="0.9" y="0.9" width="20.2" height="20.2" rx="2.5" fill="#fbfbfb" stroke="#a3a3a3" stroke-width="1.8"/>
<circle cx="6.5" cy="7" r="4.6" fill="#cc2b2b"/><path d="M4.3 4.8 L8.7 9.2 M8.7 4.8 L4.3 9.2" stroke="#fff" stroke-width="1.5"/>
<path d="M4.5 13 V17 H8 M6.5 15.5 L8.3 17 L6.5 18.5" stroke="#333" stroke-width="1" fill="none"/>
<path d="M12 8.2 H17.3 L20.3 11.2 V16.5 L17.3 19.5 H12 L9 16.5 V11.2Z" fill="#e54f2a" stroke="#c53a1c" stroke-width="0.6"/><path d="M12.3 14 V11.5 M13.7 13.6 V10.7 M15.1 13.6 V10.7 M16.5 14 V11.5" stroke="#fff" stroke-width="1.1" stroke-linecap="round"/><path d="M11.8 13.6 H17 Q17.3 17.5 14.6 17.5 Q11.8 17.5 11.8 15Z" fill="#fff"/></svg>
<div class="a" style="left:528px;top:167.5px;width:1px;height:16px;background:#b4b4b4;"></div>
<svg class="a" style="left:537px;top:165px;" width="22" height="22" viewBox="0 0 22 22"><circle cx="11" cy="11" r="10.3" fill="#cacaca" stroke="#bdbdbd" stroke-width="0.8"/><path d="M6 11.5 L9.6 15 L16.2 7.8" stroke="#e6e6e6" stroke-width="2.6" fill="none"/></svg>
<svg class="a" style="left:570px;top:165px;" width="22" height="22" viewBox="0 0 22 22"><circle cx="11" cy="11" r="10.3" fill="#cacaca" stroke="#bdbdbd" stroke-width="0.8"/><path d="M7 7 L15 15 M15 7 L7 15" stroke="#e6e6e6" stroke-width="2.8" fill="none"/></svg>
<div class="a" style="left:601.8px;top:162.8px;width:28.8px;height:27.4px;background:#fdfdfd;border:1.8px solid #1f74d6;"></div>
<svg class="a" style="left:605px;top:165.5px;" width="23" height="22" viewBox="0 0 23 22"><defs><linearGradient id="ac" x1="0" y1="0" x2="0" y2="1"><stop offset="0" stop-color="#b4b4b4"/><stop offset="1" stop-color="#dcdcdc"/></linearGradient></defs><rect x="0.5" y="0.5" width="21.5" height="21" rx="3" fill="url(#ac)" stroke="#a9a9a9" stroke-width="0.8"/><g transform="translate(3,1.5) scale(0.82)"><defs><linearGradient id="bg4" x1="0" y1="0" x2="0" y2="1"><stop offset="0" stop-color="#fbf0a8"/><stop offset="0.5" stop-color="#e9cf52"/><stop offset="1" stop-color="#c29a1c"/></linearGradient></defs>
<ellipse cx="8" cy="20.6" rx="6" ry="1" fill="#bbb" opacity=".6"/>
<path d="M4.5 1 L18.3 0.5 L12 8.6 L17.6 8.4 L1.6 20.6 L7.6 11.6 L0.8 12 Z" fill="url(#bg4)" stroke="#b08d22" stroke-width="0.9" stroke-linejoin="round"/></g><circle cx="17.3" cy="4.3" r="1.3" fill="#7bc043"/><circle cx="13.5" cy="15.5" r="4.8" fill="#4d8be0" stroke="#8fb6ec" stroke-width="0.8"/><path d="M11 15.6 L13 17.4 L16.2 13.6" stroke="#fff" stroke-width="1.4" fill="none"/></svg>
<div class="a" style="left:637px;top:167.5px;width:1px;height:16px;background:#b4b4b4;"></div>
<div class="a" style="left:643px;top:162.5px;width:151px;height:27px;background:#ffffff;border-radius:1px;"></div>
<div class="a" style="left:779px;top:163px;width:15px;height:26px;background:#f6f6f6;"></div>
<div class="t" style="top:170.19px;font-size:13.6px;letter-spacing:-0.271px;left:648px;color:#14142a;">Limit to 50000 rows</div>
<svg class="a" style="left:782px;top:175px;" width="9" height="5" viewBox="0 0 9 5"><path d="M0.5 0.3 H8 L4.25 4.5Z" fill="#111"/></svg>
<div class="a" style="left:801px;top:167.5px;width:1px;height:16px;background:#b4b4b4;"></div>
<svg class="a" style="left:810px;top:166px;" width="24" height="22" viewBox="0 0 24 22"><defs><linearGradient id="st" x1="0" y1="0" x2="0" y2="1"><stop offset="0" stop-color="#ffe26a"/><stop offset="1" stop-color="#e9a417"/></linearGradient></defs><path d="M10 0.8 L12.7 6.8 L19.3 7.5 L14.4 11.9 L15.8 18.4 L10 15.1 L4.2 18.4 L5.6 11.9 L0.7 7.5 L7.3 6.8Z" fill="url(#st)" stroke="#d18f12" stroke-width="0.8" stroke-linejoin="round"/><circle cx="17.3" cy="16.2" r="4.8" fill="#4aa53a" stroke="#2f7d25" stroke-width="0.7"/><path d="M14.4 16.2 H20.2 M17.3 13.3 V19.1" stroke="#fff" stroke-width="1.8"/><circle cx="17.3" cy="16.2" r="4.8" fill="none"/></svg>
<div class="a" style="left:842px;top:167.5px;width:1px;height:16px;background:#b4b4b4;"></div>
<svg class="a" style="left:850px;top:166px;" width="23" height="21" viewBox="0 0 23 21"><ellipse cx="10" cy="19.8" rx="9" ry="0.9" fill="#c9c9c9"/><path d="M20.8 0.8 L22 2 L15.5 9.5 L13.8 8Z" fill="#a86a2a"/><path d="M14 7 L17 10 L14.5 12.5 L11.5 9.5Z" fill="#8a5a2a"/><path d="M11.7 9 L15 12.3 L11.5 18.6 L9.3 17.8 L7.5 17.6 L5.4 16 L3.3 15 L0.8 12.5 Q7 12.5 11.7 9Z" fill="#d9b676" stroke="#a8843f" stroke-width="0.7"/><path d="M5 14 L9.5 11 M7.5 16 L11.8 11.8 M10 17.4 L13.5 12.5" stroke="#a8843f" stroke-width="0.7"/></svg>
<svg class="a" style="left:885px;top:166px;" width="20" height="21" viewBox="0 0 20 21"><circle cx="8" cy="8" r="6.8" fill="#fbfbfb" stroke="#6d6d6d" stroke-width="1.5"/><path d="M5.7 10.5 L8 4.8 L10.3 10.5 M6.6 8.7 H9.4" stroke="#b9b9b9" stroke-width="0.9" fill="none"/><path d="M13 13 L18.6 19" stroke="#6d6d6d" stroke-width="2.4" stroke-linecap="round"/></svg>
<svg class="a" style="left:917px;top:165px;" width="22" height="22" viewBox="0 0 22 22"><rect x="1" y="0.8" width="20" height="20.4" rx="2.5" fill="#e4e4e4" stroke="#8d8d8d" stroke-width="1"/><rect x="2" y="1.8" width="18" height="18.4" rx="2" fill="none" stroke="#f6f6f6"/><path d="M12.2 3.5 H8.8 Q5.6 3.5 5.6 7 Q5.6 10.5 8.8 10.5 H10.2 V18.5 M14.2 3.5 V18.5 M10.2 3.5 V10.5 M8.5 3.6 H16" stroke="#2b2b2b" stroke-width="1.7" fill="none"/><path d="M9 4 H10.5 V10 H9 Q6.3 10 6.3 7 Q6.3 4 9 4Z" fill="#2b2b2b"/></svg>
<svg class="a" style="left:951px;top:165px;" width="22" height="22" viewBox="0 0 22 22"><rect x="1" y="0.8" width="20" height="20.4" rx="2.5" fill="#f3f3f3" stroke="#8d8d8d" stroke-width="1"/><path d="M6 7.5 H16 V13 H10" stroke="#2b2b2b" stroke-width="1.6" fill="none"/><path d="M11.5 10 L8 13 L11.5 16Z" fill="#2b2b2b"/></svg>
<div class="a" style="left:263px;top:416.5px;width:1284px;height:28.5px;background:#f5f5f7;"></div>
<div class="a" style="left:263px;top:445px;width:1284px;height:259px;background:#ffffff;"></div>
<div class="a" style="left:267.0px;top:421.5px;width:1.4px;height:18.5px;background:#76849f;"></div>
<div class="t" style="top:426.01px;font-size:11.8px;letter-spacing:0.441px;left:277px;color:#2e2e2e;font-weight:700;">Result Grid</div>
<div class="a" style="left:354.0px;top:421.5px;width:1.4px;height:18.5px;background:#76849f;"></div>
<svg class="a" style="left:362px;top:422.5px;" width="17" height="17" viewBox="0 0 17 17"><rect x="0.3" y="0.3" width="15.6" height="16" fill="#a2a7ae"/><path d="M1.3 1.6 H4.6 V4 H1.3Z M1.3 5.5 H4.6 V8 H1.3Z M1.3 9.4 H4.6 V11.9 H1.3Z M1.3 13.3 H4.6 V15.4 H1.3Z M11.4 1.6 H14.7 V4 H11.4Z M11.4 5.5 H14.7 V8 H11.4Z M11.4 9.4 H14.7 V11.9 H11.4Z M11.4 13.3 H14.7 V15.4 H11.4Z" fill="#f1f3f5"/><rect x="5.3" y="0.6" width="5.4" height="15.6" fill="#fde65c" stroke="#e0a214" stroke-width="1.1"/></svg>
<svg class="a" style="left:396px;top:423px;" width="22" height="17" viewBox="0 0 22 17"><defs><linearGradient id="ra" x1="0" y1="0" x2="0" y2="1"><stop offset="0" stop-color="#5aa6ea"/><stop offset="1" stop-color="#2f6fd8"/></linearGradient><linearGradient id="rb" x1="0" y1="0" x2="0" y2="1"><stop offset="0" stop-color="#3a6fdc"/><stop offset="1" stop-color="#3f8be8"/></linearGradient></defs>
<path d="M5.7 1.6 L11 8.3 L8.3 8.3 Q8.6 12.5 12.2 15.4 Q11 16.6 9 16 Q3.4 14 3.2 8.3 L0.4 8.3 Z" fill="url(#ra)"/>
<path d="M16 15 L10.9 9.2 L13.7 9.2 Q13.4 5 9.8 1.9 Q11 0.7 13 1.2 Q18.6 3.4 18.8 9.2 L21.5 9.2 Z" fill="url(#rb)"/></svg>
<div class="t" style="top:426.10px;font-size:11.7px;letter-spacing:0.300px;left:427.5px;color:#3a3a3a;-webkit-text-stroke:0.2px #3a3a3a;">Filter Rows:</div>
<div class="a" style="left:499.5px;top:418.5px;width:123px;height:23px;background:#ffffff;border-bottom:1.5px solid #a6a6a6;border-right:1px solid #e1e1e1;border-left:1px solid #ececec;"></div>
<div class="a" style="left:629.0px;top:421.5px;width:1.4px;height:18.5px;background:#76849f;"></div>
<div class="t" style="top:426.10px;font-size:11.7px;letter-spacing:0.828px;left:635px;color:#3a3a3a;-webkit-text-stroke:0.2px #3a3a3a;">Export:</div>
<svg class="a" style="left:685px;top:420px;" width="24" height="22" viewBox="0 0 24 22"><rect x="0.5" y="0.5" width="14" height="13" fill="#f2f2f2" stroke="#9a9a9a" stroke-width="0.9"/><path d="M0.5 4 H14.5 M0.5 7.5 H14.5 M0.5 11 H14.5 M5 0.5 V13.5 M9.8 0.5 V13.5" stroke="#9a9a9a" stroke-width="0.8"/><path d="M8.5 6.5 H21.5 Q22.5 6.5 22.5 7.5 V20.5 Q22.5 21.5 21.5 21.5 H8.5 Q7.5 21.5 7.5 20.5 V7.5 Q7.5 6.5 8.5 6.5Z" fill="#4f7da8" stroke="#3a6690" stroke-width="0.8"/><rect x="10" y="7" width="10" height="6.3" fill="#eef3f8"/><rect x="11" y="15.5" width="8" height="5.5" fill="#325d88"/><rect x="15.8" y="16.5" width="2" height="3.5" fill="#e4ecf4"/></svg>
<div class="a" style="left:718.0px;top:421.5px;width:1.4px;height:18.5px;background:#76849f;"></div>
<div class="t" style="top:426.10px;font-size:11.7px;letter-spacing:0.557px;left:724px;color:#3a3a3a;-webkit-text-stroke:0.2px #3a3a3a;">Wrap Cell Content:</div>
<svg class="a" style="left:845.3px;top:424.3px;" width="15" height="15" viewBox="0 0 16 16"><path d="M0.5 1 H14.5 M0.5 14.5 H14.5" stroke="#3c4a63" stroke-width="1.2"/><path d="M3.2 2.5 V13 M1.2 4.5 L3.2 2.5 L5.2 4.5 M1.2 11 L3.2 13 L5.2 11" stroke="#3c4a63" stroke-width="1.1" fill="none"/><path d="M7 13 L10.2 3.5 L13.4 13 M8.2 9.8 H12.2" stroke="#5f6f8a" stroke-width="1.2" fill="none"/></svg>
<svg class="a" style="left:1520px;top:421px;" width="19" height="18" viewBox="0 0 19 18"><rect x="0.8" y="0.8" width="17" height="16.2" fill="#fff" stroke="#333" stroke-width="1.3"/><rect x="11.5" y="0.8" width="6.3" height="16.2" fill="#333"/></svg>
<div class="a" style="left:263px;top:444.8px;width:279px;height:1.1px;background:#8a8a8a;"></div>
<div class="a" style="left:263px;top:446px;width:1.3px;height:237.5px;background:#777;"></div>
<div class="a" style="left:263px;top:470px;width:279px;height:1.3px;background:#a8a8a8;"></div>
<div class="a" style="left:293.8px;top:446px;width:1.2px;height:237.5px;background:#8c8c8c;"></div>
<div class="a" style="left:364.0px;top:447px;width:1px;height:23px;background:#d6d6d6;"></div>
<div class="a" style="left:423.0px;top:447px;width:1px;height:23px;background:#d6d6d6;"></div>
<div class="a" style="left:541.0px;top:447px;width:1px;height:23px;background:#d6d6d6;"></div>
<div class="t" style="top:452.27px;font-size:13.5px;letter-spacing:0.067px;left:303.5px;color:#1a1a1a;">store_id</div>
<div class="t" style="top:452.27px;font-size:13.5px;letter-spacing:0.244px;left:373px;color:#1a1a1a;">rating</div>
<div class="t" style="top:452.27px;font-size:13.5px;letter-spacing:0.104px;left:432px;color:#1a1a1a;">inventory_items</div>
<div class="a" style="left:264.5px;top:491.7px;width:30px;height:1px;background:#d4d4d4;"></div>
<div class="t" style="top:476.07px;font-size:13.5px;left:299px;color:#111;">1</div>
<div class="t" style="top:476.24px;font-size:13.3px;letter-spacing:-2.219px;left:368px;color:#111;">PG</div>
<div class="t" style="top:476.24px;font-size:13.3px;letter-spacing:0.156px;left:428px;color:#111;">444</div>
<div class="a" style="left:295.5px;top:493.1px;width:68px;height:19.6px;background:#e9f0fb;"></div>
<div class="a" style="left:365.5px;top:493.1px;width:57px;height:19.6px;background:#e9f0fb;"></div>
<div class="a" style="left:424.5px;top:493.1px;width:116.5px;height:19.6px;background:#e9f0fb;"></div>
<div class="a" style="left:264.5px;top:512.9px;width:30px;height:1px;background:#d4d4d4;"></div>
<div class="t" style="top:497.27px;font-size:13.5px;left:299px;color:#111;">1</div>
<div class="t" style="top:497.44px;font-size:13.3px;left:368px;color:#111;">G</div>
<div class="t" style="top:497.44px;font-size:13.3px;letter-spacing:0.156px;left:428px;color:#111;">394</div>
<div class="a" style="left:264.5px;top:534.1px;width:30px;height:1px;background:#d4d4d4;"></div>
<div class="t" style="top:518.47px;font-size:13.5px;left:299px;color:#111;">1</div>
<div class="t" style="top:518.64px;font-size:13.3px;letter-spacing:-0.359px;left:368px;color:#111;">PG-13</div>
<div class="t" style="top:518.64px;font-size:13.3px;letter-spacing:0.156px;left:428px;color:#111;">525</div>
<div class="a" style="left:295.5px;top:535.5px;width:68px;height:19.6px;background:#e9f0fb;"></div>
<div class="a" style="left:365.5px;top:535.5px;width:57px;height:19.6px;background:#e9f0fb;"></div>
<div class="a" style="left:424.5px;top:535.5px;width:116.5px;height:19.6px;background:#e9f0fb;"></div>
<div class="a" style="left:264.5px;top:555.3px;width:30px;height:1px;background:#d4d4d4;"></div>
<div class="t" style="top:539.67px;font-size:13.5px;left:299px;color:#111;">1</div>
<div class="t" style="top:539.84px;font-size:13.3px;letter-spacing:0.016px;left:368px;color:#111;">NC-17</div>
<div class="t" style="top:539.84px;font-size:13.3px;letter-spacing:0.156px;left:428px;color:#111;">465</div>
<div class="a" style="left:264.5px;top:576.5px;width:30px;height:1px;background:#d4d4d4;"></div>
<div class="t" style="top:560.87px;font-size:13.5px;left:299px;color:#111;">1</div>
<div class="t" style="top:561.04px;font-size:13.3px;left:368px;color:#111;">R</div>
<div class="t" style="top:561.04px;font-size:13.3px;letter-spacing:0.156px;left:428px;color:#111;">442</div>
<div class="a" style="left:295.5px;top:577.9px;width:68px;height:19.6px;background:#e9f0fb;"></div>
<div class="a" style="left:365.5px;top:577.9px;width:57px;height:19.6px;background:#e9f0fb;"></div>
<div class="a" style="left:424.5px;top:577.9px;width:116.5px;height:19.6px;background:#e9f0fb;"></div>
<div class="a" style="left:264.5px;top:597.7px;width:30px;height:1px;background:#d4d4d4;"></div>
<div class="t" style="top:582.07px;font-size:13.5px;left:299px;color:#111;">2</div>
<div class="t" style="top:582.24px;font-size:13.3px;letter-spacing:-2.219px;left:368px;color:#111;">PG</div>
<div class="t" style="top:582.24px;font-size:13.3px;letter-spacing:0.156px;left:428px;color:#111;">480</div>
<div class="a" style="left:264.5px;top:618.9px;width:30px;height:1px;background:#d4d4d4;"></div>
<div class="t" style="top:603.27px;font-size:13.5px;left:299px;color:#111;">2</div>
<div class="t" style="top:603.44px;font-size:13.3px;left:368px;color:#111;">G</div>
<div class="t" style="top:603.44px;font-size:13.3px;letter-spacing:0.156px;left:428px;color:#111;">397</div>
<div class="a" style="left:295.5px;top:620.3px;width:68px;height:19.6px;background:#e9f0fb;"></div>
<div class="a" style="left:365.5px;top:620.3px;width:57px;height:19.6px;background:#e9f0fb;"></div>
<div class="a" style="left:424.5px;top:620.3px;width:116.5px;height:19.6px;background:#e9f0fb;"></div>
<div class="a" style="left:264.5px;top:640.1px;width:30px;height:1px;background:#d4d4d4;"></div>
<div class="t" style="top:624.47px;font-size:13.5px;left:299px;color:#111;">2</div>
<div class="t" style="top:624.64px;font-size:13.3px;letter-spacing:0.016px;left:368px;color:#111;">NC-17</div>
<div class="t" style="top:624.64px;font-size:13.3px;letter-spacing:0.156px;left:428px;color:#111;">479</div>
<div class="a" style="left:264.5px;top:661.3px;width:30px;height:1px;background:#d4d4d4;"></div>
<div class="t" style="top:645.67px;font-size:13.5px;left:299px;color:#111;">2</div>
<div class="t" style="top:645.84px;font-size:13.3px;letter-spacing:-0.359px;left:368px;color:#111;">PG-13</div>
<div class="t" style="top:645.84px;font-size:13.3px;letter-spacing:0.156px;left:428px;color:#111;">493</div>
<div class="a" style="left:295.5px;top:662.7px;width:68px;height:19.6px;background:#e9f0fb;"></div>
<div class="a" style="left:365.5px;top:662.7px;width:57px;height:19.6px;background:#e9f0fb;"></div>
<div class="a" style="left:424.5px;top:662.7px;width:116.5px;height:19.6px;background:#e9f0fb;"></div>
<div class="a" style="left:264.5px;top:682.5px;width:30px;height:1px;background:#d4d4d4;"></div>
<div class="t" style="top:666.87px;font-size:13.5px;left:299px;color:#111;">2</div>
<div class="t" style="top:667.04px;font-size:13.3px;left:368px;color:#111;">R</div>
<div class="t" style="top:667.04px;font-size:13.3px;letter-spacing:0.156px;left:428px;color:#111;">462</div>
<svg class="a" style="left:271.5px;top:476.5px;" width="8" height="12" viewBox="0 0 8 12"><path d="M0.3 0.5 L7.3 6 L0.3 11.5Z" fill="#222"/></svg>
<div class="a" style="left:263px;top:704px;width:1356px;height:24px;background:#e7e7e7;"></div>
<div class="a" style="left:263px;top:704px;width:88.5px;height:24px;background:#ffffff;"></div>
<div class="t" style="top:708.57px;font-size:13.5px;letter-spacing:0.210px;left:272px;color:#1f7fd0;">Result 3</div>
<svg class="a" style="left:332.5px;top:710.5px;" width="11" height="11" viewBox="0 0 11 11"><path d="M1 1 L10 10 M10 1 L1 10" stroke="#555" stroke-width="1.2"/></svg>
<svg class="a" style="left:1526.5px;top:708.5px;" width="13" height="13" viewBox="0 0 13 13"><circle cx="6.5" cy="6.5" r="6.2" fill="#2f7fdc"/><path d="M6.5 3 V7.3" stroke="#fff" stroke-width="2"/><circle cx="6.5" cy="9.7" r="1.1" fill="#fff"/></svg>
<div class="t" style="top:708.65px;font-size:14px;letter-spacing:-0.395px;left:1550px;color:#111;">Read Only</div>
<div class="a" style="left:1546.8px;top:416.2px;width:72.6px;height:85px;background:#0877d1;"></div>
<div class="a" style="left:1546.8px;top:501px;width:72.6px;height:203px;background:#e6e6e6;"></div>
<svg class="a" style="left:1547px;top:451px;" width="11" height="21" viewBox="0 0 11 21"><path d="M0 0 L10.5 10.5 L0 21Z" fill="#f4f4f6"/></svg>
<svg class="a" style="left:1566px;top:420px;" width="36" height="38" viewBox="0 0 36 38"><rect x="1.5" y="1.3" width="32.8" height="34.7" rx="2.2" fill="#fbfbfb"/><rect x="4.5" y="5.5" width="27.5" height="28" fill="#1b5183"/><rect x="4.5" y="5.5" width="27.5" height="2.6" fill="#143252"/><path d="M4.5 33.2 H32" stroke="#143252" stroke-width="1"/><path d="M6.2 10.2 H12.4 M14.4 10.2 H21.5 M23.1 10.2 H30.3 M6.2 15.2 H12.4 M14.4 15.2 H21.5 M23.1 15.2 H30.3 M6.2 20.1 H12.4 M14.4 20.1 H21.5 M23.1 20.1 H30.3 M6.2 25 H12.4 M14.4 25 H21.5 M23.1 25 H30.3 M6.2 30 H12.4 M14.4 30 H21.5 M23.1 30 H30.3 " stroke="#f0ece0" stroke-width="2"/></svg>
<div class="t" style="top:464.93px;font-size:11.9px;letter-spacing:-0.144px;left:1565.5px;color:#fff;">Result</div>
<div class="t" style="top:477.43px;font-size:11.9px;letter-spacing:-0.156px;left:1571px;color:#fff;">Grid</div>
<svg class="a" style="left:1566px;top:506px;" width="36" height="38" viewBox="0 0 36 38"><rect x="1.5" y="1.5" width="33" height="35" rx="2" fill="#ededed" stroke="#dadada" stroke-width="1"/><rect x="5" y="7" width="26" height="24" fill="#f2f2f2" stroke="#d2d2d2" stroke-width="1"/><path d="M5 8 H31" stroke="#d0d0d0" stroke-width="2"/><rect x="15" y="12" width="13" height="6" fill="none" stroke="#d2d2d2"/><path d="M8 15 H13 M8 22 H13 M15 22 H24 M15 26 H20" stroke="#d2d2d2" stroke-width="1.3"/></svg>
<div class="t" style="top:548.93px;font-size:11.9px;letter-spacing:0.417px;left:1567px;color:#5a5a5a;">Form</div>
<div class="t" style="top:562.23px;font-size:11.9px;letter-spacing:0.487px;left:1565.5px;color:#5a5a5a;">Editor</div>
<svg class="a" style="left:1566px;top:591px;" width="40" height="38" viewBox="0 0 40 38"><rect x="1.5" y="1.5" width="33" height="35" rx="2" fill="#ededed" stroke="#dadada" stroke-width="1"/><path d="M5 8 H22 M5 12 H20 M5 16 H22 M5 20 H31 M5 24 H31 M5 28 H31 M5 32 H31" stroke="#d4d4d4" stroke-width="1.4"/><circle cx="26" cy="10" r="5.5" fill="#f0f0f0" stroke="#d2d2d2" stroke-width="1.6"/><path d="M30 14 L36 20" stroke="#d2d2d2" stroke-width="2.4"/></svg>
<div class="t" style="top:635.43px;font-size:11.9px;letter-spacing:-0.070px;left:1569.5px;color:#5a5a5a;">Field</div>
<div class="t" style="top:646.43px;font-size:11.9px;letter-spacing:0.441px;left:1565.5px;color:#5a5a5a;">Types</div>
<svg class="a" style="left:1570px;top:661px;" width="26" height="38" viewBox="0 0 26 38"><path d="M1.5 14 L12.5 3 L23.5 14" stroke="#dedede" stroke-width="5" fill="none"/><path d="M1.5 22.5 L12.5 33.5 L23.5 22.5" stroke="#cccccc" stroke-width="5" fill="none"/></svg>
<div class="a" style="left:1624px;top:133px;width:278px;height:25.6px;background:#e7e7e7;"></div>
<div class="t" style="top:139.00px;font-size:13px;letter-spacing:0.682px;left:1633.5px;color:#6e6e6e;">SQLAdditions</div>
<div class="a" style="left:1722.5px;top:142.5px;width:179.5px;height:7px;background-image:radial-gradient(circle,#9a9a9a 0.35px,rgba(154,154,154,0) 1.1px),radial-gradient(circle,#9a9a9a 0.35px,rgba(154,154,154,0) 1.1px);background-size:5px 5px;background-position:0 -1.2px,2.5px 1.3px;"></div>
<div class="a" style="left:1624px;top:158.6px;width:278px;height:35px;background:linear-gradient(#f8f8f9,#f3f3f5);"></div>
<svg class="a" style="left:1638.5px;top:170px;" width="11" height="12" viewBox="0 0 11 12"><path d="M10.5 0.5 V11.5 L0.5 6Z" fill="#c2c2c2"/></svg>
<svg class="a" style="left:1675px;top:170px;" width="11" height="12" viewBox="0 0 11 12"><path d="M0.5 0.5 V11.5 L10.5 6Z" fill="#c2c2c2"/></svg>
<div class="a" style="left:1700.5px;top:166.5px;width:1.2px;height:18.5px;background:#8b99b3;"></div>
<svg class="a" style="left:1710px;top:165px;" width="23" height="22" viewBox="0 0 23 22"><rect x="0.7" y="0.7" width="21" height="20.3" rx="2.5" fill="#e2e2e2" stroke="#8d8d8d" stroke-width="1"/><rect x="1.7" y="1.7" width="19" height="18.3" rx="2" fill="none" stroke="#f5f5f5"/>
<path d="M5.5 4.5 Q7.6 4.5 8.3 5.6 Q9 4.5 11.1 4.5 M8.3 5.6 V14.4 M5.5 15.5 Q7.6 15.5 8.3 14.4 Q9 15.5 11.1 15.5" stroke="#3f3f3f" stroke-width="2.5" fill="none" stroke-linecap="round"/><path d="M5.5 4.5 Q7.6 4.5 8.3 5.6 Q9 4.5 11.1 4.5 M8.3 5.6 V14.4 M5.5 15.5 Q7.6 15.5 8.3 14.4 Q9 15.5 11.1 15.5" stroke="#f4f4f4" stroke-width="0.9" fill="none"/>
<path d="M12.6 10.6 Q12.6 8.2 15 8.2 Q17.4 8.2 17.4 10.4 Q17.4 11.8 16 12.6 Q15 13.2 15 14.6" stroke="#2b2b2b" stroke-width="1.7" fill="none"/><circle cx="15" cy="17" r="1.1" fill="#2b2b2b"/></svg>
<svg class="a" style="left:1743px;top:165px;" width="23" height="24" viewBox="0 0 23 24"><path d="M3 1 L9.5 0.8 L6.8 4.8 L9.3 4.7 L1.5 12.5 L4.3 6.6 L1 6.8Z" fill="#efcf4d" stroke="#c7a02a" stroke-width="0.6"/>
<path d="M6.5 7.5 Q8.6 7.5 9.3 8.6 Q10 7.5 12.1 7.5 M9.3 8.6 V17.4 M6.5 18.5 Q8.6 18.5 9.3 17.4 Q10 18.5 12.1 18.5" stroke="#3f3f3f" stroke-width="2.5" fill="none" stroke-linecap="round"/><path d="M6.5 7.5 Q8.6 7.5 9.3 8.6 Q10 7.5 12.1 7.5 M9.3 8.6 V17.4 M6.5 18.5 Q8.6 18.5 9.3 17.4 Q10 18.5 12.1 18.5" stroke="#f4f4f4" stroke-width="0.9" fill="none"/>
<path d="M13.8 14 Q13.8 11.6 16.2 11.6 Q18.6 11.6 18.6 13.8 Q18.6 15.2 17.2 16 Q16.2 16.6 16.2 18" stroke="#2b2b2b" stroke-width="1.7" fill="none"/><circle cx="16.2" cy="20.6" r="1.1" fill="#2b2b2b"/></svg>
<div class="a" style="left:1775.5px;top:166.5px;width:1.2px;height:18.5px;background:#8b99b3;"></div>
<div class="a" style="left:1781.5px;top:163px;width:121px;height:26px;background:#ffffff;"></div>
<div class="t" style="top:169.99px;font-size:13.6px;letter-spacing:-0.393px;left:1786px;color:#14142a;">Jump to</div>
<div class="a" style="left:1624px;top:194px;width:278px;height:510px;background:#ffffff;"></div>
<div class="t" style="top:208.57px;font-size:20px;letter-spacing:0.793px;left:1650px;color:#797979;font-weight:700;text-shadow:0.6px 0.8px 0 rgba(214,175,110,.55);">Automatic context help is</div>
<div class="t" style="top:232.77px;font-size:20px;letter-spacing:0.694px;left:1638px;color:#797979;font-weight:700;text-shadow:0.6px 0.8px 0 rgba(214,175,110,.55);">disabled. Use the toolbar to</div>
<div class="t" style="top:257.07px;font-size:20px;letter-spacing:0.750px;left:1651px;color:#797979;font-weight:700;text-shadow:0.6px 0.8px 0 rgba(214,175,110,.55);">manually get help for the</div>
<div class="t" style="top:281.07px;font-size:20px;letter-spacing:0.645px;left:1643px;color:#797979;font-weight:700;text-shadow:0.6px 0.8px 0 rgba(214,175,110,.55);">current caret position or to</div>
<div class="t" style="top:305.37px;font-size:20px;letter-spacing:0.798px;left:1666px;color:#797979;font-weight:700;text-shadow:0.6px 0.8px 0 rgba(214,175,110,.55);">toggle automatic help.</div>
<div class="a" style="left:1624px;top:704px;width:278px;height:24px;background:#e7e7e7;"></div>
<div class="a" style="left:1624px;top:704px;width:101px;height:24px;background:#ffffff;"></div>
<div class="t" style="top:708.57px;font-size:13.5px;letter-spacing:0.268px;left:1634px;color:#1f7fd0;">Context Help</div>
<div class="t" style="top:708.57px;font-size:13.5px;letter-spacing:0.208px;left:1734px;color:#222;">Snippets</div>
<div class="a" style="left:263px;top:735px;width:1639px;height:25.6px;background:#e7e7e7;"></div>
<div class="t" style="top:741.00px;font-size:13px;letter-spacing:0.394px;left:272px;color:#6e6e6e;">Output</div>
<div class="a" style="left:315px;top:744.5px;width:1587px;height:7px;background-image:radial-gradient(circle,#9a9a9a 0.35px,rgba(154,154,154,0) 1.1px),radial-gradient(circle,#9a9a9a 0.35px,rgba(154,154,154,0) 1.1px);background-size:5px 5px;background-position:0 -1.2px,2.5px 1.3px;"></div>
<div class="a" style="left:263px;top:761px;width:1639px;height:34.5px;background:#f4f4f6;"></div>
<svg class="a" style="left:272.5px;top:770px;" width="18" height="18" viewBox="0 0 18 18"><path d="M5.5 0.8 H16.2 V11.5 M3.2 3 H14 V13.8" fill="none" stroke="#444" stroke-width="1.1"/><rect x="0.8" y="5.2" width="11" height="11.4" fill="#fff" stroke="#333" stroke-width="1.3"/></svg>
<div class="a" style="left:298px;top:766.5px;width:187px;height:25px;background:#ffffff;"></div>
<div class="a" style="left:471px;top:767px;width:14px;height:24px;background:#f1f1f1;"></div>
<div class="t" style="top:773.49px;font-size:13.6px;letter-spacing:-0.198px;left:303px;color:#14142a;">Action Output</div>
<svg class="a" style="left:474px;top:777.5px;" width="8" height="4.5" viewBox="0 0 8 4.5"><path d="M0.3 0.2 H6.7 L3.5 3.8Z" fill="#111"/></svg>
<div class="a" style="left:263px;top:795.5px;width:1625.5px;height:189px;background:#ffffff;"></div>
<div class="a" style="left:1888.5px;top:795.5px;width:13.5px;height:189px;background:#f0f0f1;"></div>
<div class="a" style="left:1897.5px;top:943px;width:3px;height:20.5px;background:#5a5a5a;border-radius:1px;"></div>
<div class="a" style="left:264px;top:819.2px;width:1624px;height:25.8px;background:#eaf1fb;"></div>
<div class="a" style="left:264px;top:874.2px;width:1624px;height:25.8px;background:#eaf1fb;"></div>
<div class="a" style="left:264px;top:929.2px;width:1624px;height:25.8px;background:#eaf1fb;"></div>
<div class="a" style="left:288.9px;top:797px;width:1.2px;height:22px;background:#e0e0e0;"></div>
<div class="a" style="left:288.5px;top:819px;width:2px;height:165.5px;background:#ffffff;"></div>
<div class="a" style="left:333.9px;top:797px;width:1.2px;height:22px;background:#e0e0e0;"></div>
<div class="a" style="left:333.5px;top:819px;width:2px;height:165.5px;background:#ffffff;"></div>
<div class="a" style="left:397.9px;top:797px;width:1.2px;height:22px;background:#e0e0e0;"></div>
<div class="a" style="left:397.5px;top:819px;width:2px;height:165.5px;background:#ffffff;"></div>
<div class="a" style="left:1071.9px;top:797px;width:1.2px;height:22px;background:#e0e0e0;"></div>
<div class="a" style="left:1071.5px;top:819px;width:2px;height:165.5px;background:#ffffff;"></div>
<div class="a" style="left:1746.9px;top:797px;width:1.2px;height:22px;background:#e0e0e0;"></div>
<div class="a" style="left:1746.5px;top:819px;width:2px;height:165.5px;background:#ffffff;"></div>
<div class="a" style="left:1887.3px;top:797px;width:1.2px;height:22px;background:#e0e0e0;"></div>
<div class="t" style="top:802.27px;font-size:11.5px;left:298.5px;color:#222;">#</div>
<div class="t" style="top:802.27px;font-size:11.5px;letter-spacing:0.120px;left:343.5px;color:#222;">Time</div>
<div class="t" style="top:802.27px;font-size:11.5px;letter-spacing:0.506px;left:407px;color:#222;">Action</div>
<div class="t" style="top:802.27px;font-size:11.5px;letter-spacing:-0.029px;left:1081.5px;color:#222;">Message</div>
<div class="t" style="top:802.27px;font-size:11.5px;letter-spacing:0.478px;left:1756px;color:#222;">Duration / Fetch</div>
<svg class="a" style="left:268.8px;top:824.8px;" width="14.6" height="14.6" viewBox="0 0 15 15"><circle cx="7.5" cy="7.5" r="7" fill="#1fa51f" stroke="#127a12" stroke-width="0.9"/><path d="M3.8 7.8 L6.5 10.4 L11.3 4.9" stroke="#fff" stroke-width="2.1" fill="none"/></svg>
<div class="t" style="top:823.15px;font-size:14px;letter-spacing:-0.680px;left:307px;color:#111;">106</div>
<div class="t" style="top:823.15px;font-size:14px;letter-spacing:-0.357px;left:339.5px;color:#111;">23:47:29</div>
<div class="t" style="top:823.15px;font-size:14px;letter-spacing:-0.553px;left:402.5px;color:#111;">COMMIT</div>
<div class="t" style="top:823.15px;font-size:14px;letter-spacing:-0.407px;left:1077px;color:#111;">0 row(s) affected</div>
<div class="t" style="top:823.15px;font-size:14px;letter-spacing:-0.465px;left:1752px;color:#111;">0.000 sec</div>
<svg class="a" style="left:268.8px;top:852.3px;" width="14.6" height="14.6" viewBox="0 0 15 15"><circle cx="7.5" cy="7.5" r="7" fill="#1fa51f" stroke="#127a12" stroke-width="0.9"/><path d="M3.8 7.8 L6.5 10.4 L11.3 4.9" stroke="#fff" stroke-width="2.1" fill="none"/></svg>
<div class="t" style="top:850.65px;font-size:14px;letter-spacing:-0.680px;left:307px;color:#111;">107</div>
<div class="t" style="top:850.65px;font-size:14px;letter-spacing:-0.357px;left:339.5px;color:#111;">23:47:29</div>
<div class="t" style="top:850.65px;font-size:14px;letter-spacing:-0.583px;left:402.5px;color:#111;">SET FOREIGN_KEY_CHECKS=@OLD_FOREIGN_KEY_CHECKS</div>
<div class="t" style="top:850.65px;font-size:14px;letter-spacing:-0.407px;left:1077px;color:#111;">0 row(s) affected</div>
<div class="t" style="top:850.65px;font-size:14px;letter-spacing:-0.465px;left:1752px;color:#111;">0.000 sec</div>
<svg class="a" style="left:268.8px;top:879.8px;" width="14.6" height="14.6" viewBox="0 0 15 15"><circle cx="7.5" cy="7.5" r="7" fill="#1fa51f" stroke="#127a12" stroke-width="0.9"/><path d="M3.8 7.8 L6.5 10.4 L11.3 4.9" stroke="#fff" stroke-width="2.1" fill="none"/></svg>
<div class="t" style="top:878.15px;font-size:14px;letter-spacing:-0.680px;left:307px;color:#111;">108</div>
<div class="t" style="top:878.15px;font-size:14px;letter-spacing:-0.357px;left:339.5px;color:#111;">23:47:29</div>
<div class="t" style="top:878.15px;font-size:14px;letter-spacing:-0.514px;left:402.5px;color:#111;">SET UNIQUE_CHECKS=@OLD_UNIQUE_CHECKS</div>
<div class="t" style="top:878.15px;font-size:14px;letter-spacing:-0.407px;left:1077px;color:#111;">0 row(s) affected</div>
<div class="t" style="top:878.15px;font-size:14px;letter-spacing:-0.465px;left:1752px;color:#111;">0.000 sec</div>
<svg class="a" style="left:268.8px;top:907.3px;" width="14.6" height="14.6" viewBox="0 0 15 15"><circle cx="7.5" cy="7.5" r="7" fill="#1fa51f" stroke="#127a12" stroke-width="0.9"/><path d="M3.8 7.8 L6.5 10.4 L11.3 4.9" stroke="#fff" stroke-width="2.1" fill="none"/></svg>
<div class="t" style="top:905.65px;font-size:14px;letter-spacing:-0.680px;left:307px;color:#111;">109</div>
<div class="t" style="top:905.65px;font-size:14px;letter-spacing:-0.357px;left:339.5px;color:#111;">00:08:54</div>
<div class="t" style="top:905.65px;font-size:14px;letter-spacing:-0.408px;left:402.5px;color:#111;">Select  staff.first_name AS manager_first_name, staff.last_name AS manager_last_name, address.address, add...</div>
<div class="t" style="top:905.65px;font-size:14px;letter-spacing:-0.568px;left:1077px;color:#111;">2 row(s) returned</div>
<div class="t" style="top:905.65px;font-size:14px;letter-spacing:-0.155px;left:1752px;color:#111;">0.000 sec / 0.000 sec</div>
<svg class="a" style="left:268.8px;top:934.8px;" width="14.6" height="14.6" viewBox="0 0 15 15"><circle cx="7.5" cy="7.5" r="7" fill="#1fa51f" stroke="#127a12" stroke-width="0.9"/><path d="M3.8 7.8 L6.5 10.4 L11.3 4.9" stroke="#fff" stroke-width="2.1" fill="none"/></svg>
<div class="t" style="top:933.15px;font-size:14px;letter-spacing:-0.164px;left:307px;color:#111;">110</div>
<div class="t" style="top:933.15px;font-size:14px;letter-spacing:-0.357px;left:339.5px;color:#111;">00:16:25</div>
<div class="t" style="top:933.15px;font-size:14px;letter-spacing:-0.368px;left:402.5px;color:#111;">select inventory.store_id, inventory.inventory_id, film.title, film.rating, film.rental_rate, film.replacement_cost from ...</div>
<div class="t" style="top:933.15px;font-size:14px;letter-spacing:-0.524px;left:1077px;color:#111;">4581 row(s) returned</div>
<div class="t" style="top:933.15px;font-size:14px;letter-spacing:-0.155px;left:1752px;color:#111;">0.016 sec / 0.000 sec</div>
<svg class="a" style="left:268.8px;top:962.3px;" width="14.6" height="14.6" viewBox="0 0 15 15"><circle cx="7.5" cy="7.5" r="7" fill="#1fa51f" stroke="#127a12" stroke-width="0.9"/><path d="M3.8 7.8 L6.5 10.4 L11.3 4.9" stroke="#fff" stroke-width="2.1" fill="none"/></svg>
<div class="t" style="top:960.65px;font-size:14px;letter-spacing:0.359px;left:307px;color:#111;">111</div>
<div class="t" style="top:960.65px;font-size:14px;letter-spacing:-0.210px;left:339.5px;color:#111;">00:23:11</div>
<div class="t" style="top:960.65px;font-size:14px;letter-spacing:-0.356px;left:402.5px;color:#111;">select inventory.store_id, film.rating, count(inventory_id) as inventory_items from inventory left join film on invent...</div>
<div class="t" style="top:960.65px;font-size:14px;letter-spacing:-0.552px;left:1077px;color:#111;">10 row(s) returned</div>
<div class="t" style="top:960.65px;font-size:14px;letter-spacing:-0.155px;left:1752px;color:#111;">0.000 sec / 0.000 sec</div>
<div class="a" style="left:5px;top:735px;width:250px;height:25.6px;background:#e7e7e7;"></div>
<div class="t" style="top:741.00px;font-size:13px;letter-spacing:0.995px;left:14px;color:#6e6e6e;">Information</div>
<div class="a" style="left:91px;top:744.5px;width:160px;height:7px;background-image:radial-gradient(circle,#9a9a9a 0.35px,rgba(154,154,154,0) 1.1px),radial-gradient(circle,#9a9a9a 0.35px,rgba(154,154,154,0) 1.1px);background-size:5px 5px;background-position:0 -1.2px,2.5px 1.3px;"></div>
<div class="a" style="left:5.3px;top:760.6px;width:230.3px;height:201px;background:#ffffff;"></div>
<div class="a" style="left:235.6px;top:760.6px;width:19.4px;height:201px;background:#f0f0f1;"></div>
<div class="a" style="left:244.4px;top:782px;width:2.5px;height:123px;background:#6b6b6b;border-radius:1px;"></div>
<div class="t" style="top:791.58px;font-size:15.5px;letter-spacing:0.100px;left:34px;color:#111;font-weight:700;">Table:</div>
<div class="t" style="top:791.58px;font-size:15.5px;letter-spacing:0.384px;left:84px;color:#1e9a3c;font-weight:700;">investor</div>
<div class="t" style="top:826.88px;font-size:15.5px;letter-spacing:-0.210px;left:34px;color:#111;font-weight:700;">Columns:</div>
<div class="t" style="top:862.38px;font-size:15.5px;letter-spacing:0.430px;left:52px;color:#111;font-weight:700;text-decoration:underline;text-decoration-thickness:1.3px;text-underline-offset:2px;">investor_id</div>
<div class="t" style="top:845.73px;font-size:14.5px;letter-spacing:-0.022px;left:177px;color:#8a8a8a;">smallint</div>
<div class="t" style="top:862.73px;font-size:14.5px;letter-spacing:0.531px;left:177px;color:#8a8a8a;">UN AI</div>
<div class="t" style="top:881.03px;font-size:14.5px;letter-spacing:-2.344px;left:177px;color:#8a8a8a;">PK</div>
<div class="t" style="top:897.73px;font-size:14.5px;letter-spacing:0.255px;left:52px;color:#222;">first_name</div>
<div class="t" style="top:897.73px;font-size:14.5px;letter-spacing:-0.060px;left:177px;color:#8a8a8a;">varchar</div>
<div class="t" style="top:915.23px;font-size:14.5px;letter-spacing:0.074px;left:52px;color:#222;">last_name</div>
<div class="t" style="top:915.23px;font-size:14.5px;letter-spacing:-0.060px;left:177px;color:#8a8a8a;">varchar</div>
<div class="t" style="top:931.53px;font-size:14.5px;letter-spacing:0.257px;left:52px;color:#222;">company_name</div>
<div class="t" style="top:931.53px;font-size:14.5px;letter-spacing:-0.060px;left:177px;color:#8a8a8a;">varchar</div>
<div class="a" style="left:5px;top:961.3px;width:250px;height:23.7px;background:#e7e7e7;"></div>
<div class="a" style="left:5.3px;top:961.3px;width:90.4px;height:23.7px;background:#ffffff;"></div>
<div class="t" style="top:965.87px;font-size:13.5px;letter-spacing:0.470px;left:15px;color:#1f7fd0;">Object Info</div>
<div class="t" style="top:965.87px;font-size:13.5px;letter-spacing:0.161px;left:104px;color:#333;">Session</div>
<div class="a" style="left:0px;top:984.5px;width:1902px;height:36px;background:#f0f0f1;"></div>
<div class="t" style="top:998.98px;font-size:14.2px;letter-spacing:0.379px;left:3.5px;color:#3a3a3a;">Query Completed</div>
<div class="a" style="left:1868.5px;top:998px;width:1px;height:15px;background:#9a9a9a;"></div>
<div class="a" style="left:1894.5px;top:998px;width:1px;height:15px;background:#9a9a9a;"></div>
<svg class="a" style="left:1873px;top:998px;" width="17" height="16" viewBox="0 0 17 16"><rect x="0.7" y="0.7" width="14.6" height="13.6" rx="1.5" fill="#f2f2f2" stroke="#6b6b6b" stroke-width="1"/><path d="M3.5 4 H12.5 M3.5 6.5 H10 M3.5 9 H12.5 M3.5 11.5 H10" stroke="#555" stroke-width="1.1"/><path d="M2 15.3 H16.3 V2" stroke="#c8c8c8" stroke-width="1" fill="none"/></svg>
<div class="a" style="left:0px;top:1020px;width:1902px;height:12px;background:linear-gradient(90deg,#15272f 0%,#15262f 40%,#16253c 75%,#17213f 100%);"></div>
<div class="a" style="left:37px;top:1027.7px;width:18px;height:18px;background:#d33a2c;border-radius:50%;"></div>
<div class="a" style="left:612px;top:1030.5px;width:250px;height:6px;background:#e8e8e8;border-radius:3px;"></div>
<div class="a" style="left:907px;top:1028.7px;width:18px;height:18px;background:#29a3e8;border-radius:50%;"></div>
<div class="a" style="left:1322px;top:1029px;width:48px;height:8px;background:#2b3948;border-radius:3px 3px 0 0;"></div>
</body>
</html>
